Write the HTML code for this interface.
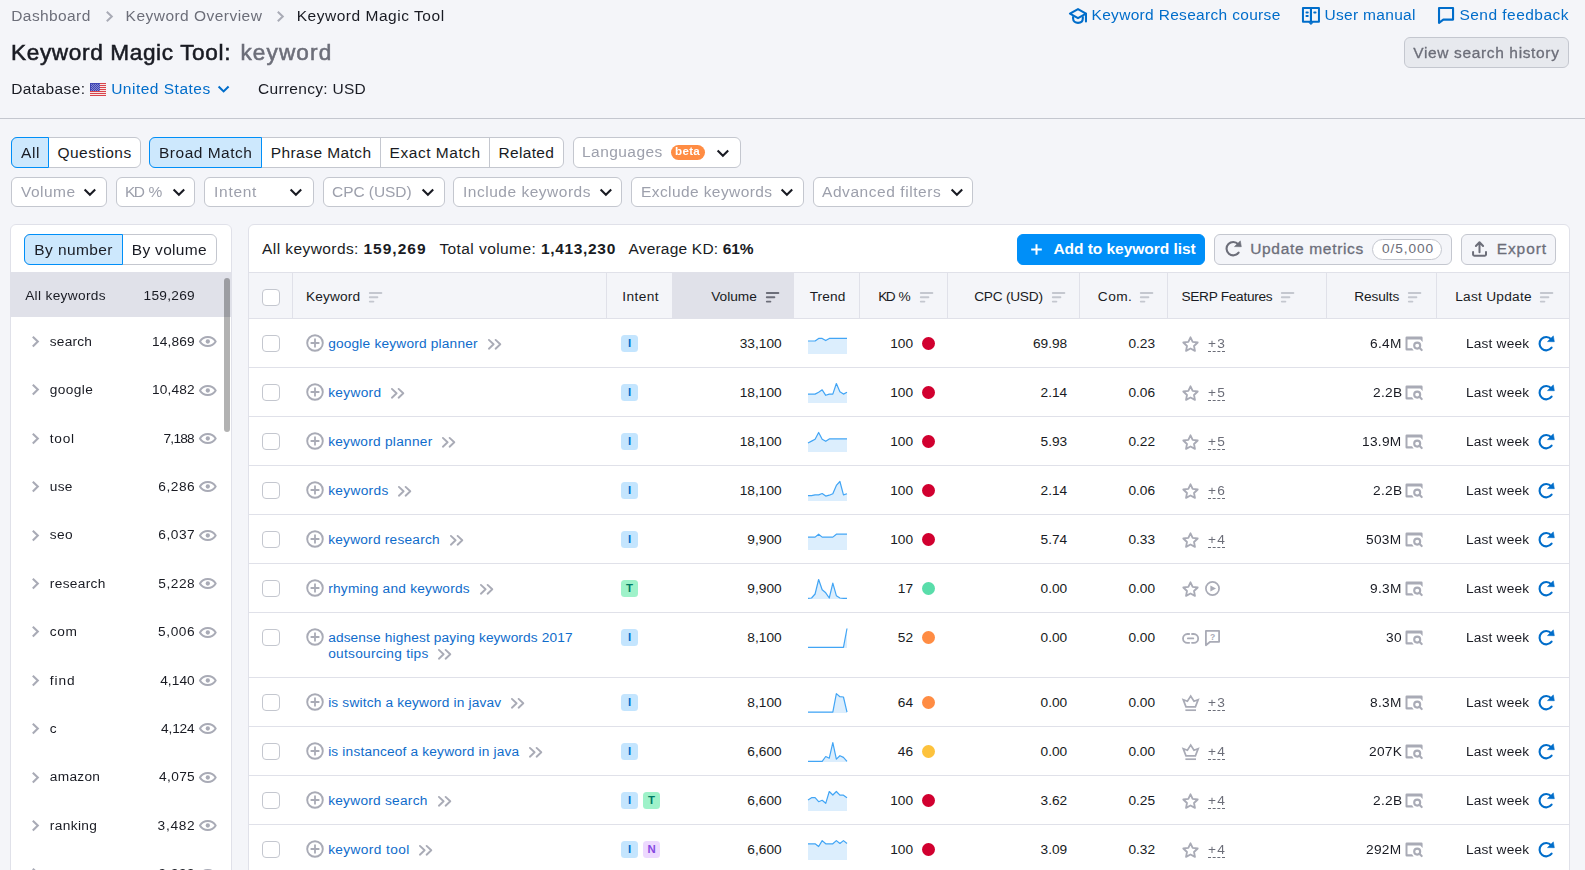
<!DOCTYPE html>
<html lang="en"><head><meta charset="utf-8"><title>Keyword Magic Tool</title>
<style>
*{box-sizing:border-box;margin:0;padding:0}
html,body{width:1585px;height:870px;overflow:hidden;background:#f4f5f9}
body{font-family:"Liberation Sans",sans-serif;color:#191b23;position:relative;font-size:15.4px}
.t{position:absolute;white-space:nowrap;display:block;z-index:3}
.abs{position:absolute}
.btn{position:absolute;border:1px solid #c4c7cf;background:#fff;border-radius:6px}
.sel{background:#cde8fd;border-color:#008ff8;z-index:2}
.panel{position:absolute;background:#fff;border:1px solid #e0e1e9;border-radius:6px}
.cb{position:absolute;width:18px;height:17px;border:1px solid #c4c7cf;border-radius:4px;background:#fff}
.hline{position:absolute;height:1px;background:#e0e1e9}
.vline{position:absolute;width:1px;background:#e0e1e9}
svg{position:absolute;overflow:visible}
a{text-decoration:none}
</style></head>
<body>

<header style="will-change:transform">
<a class="t" style="top:5.60px;height:20px;line-height:20px;font-size:15.50px;color:#6c6e79;left:11.28px;letter-spacing:0.398px;">Dashboard</a>
<svg style="left:105.90px;top:11.00px" width="6.6" height="11.0" viewBox="0 0 6.6 11.0"><path d="M0.8 0.8 L5.80 5.50 L0.8 10.20" fill="none" stroke="#a9abb6" stroke-width="2.00" stroke-linecap="butt" stroke-linejoin="miter"/></svg>
<a class="t" style="top:5.60px;height:20px;line-height:20px;font-size:15.50px;color:#6c6e79;left:125.58px;letter-spacing:0.474px;">Keyword Overview</a>
<svg style="left:277.20px;top:11.00px" width="6.6" height="11.0" viewBox="0 0 6.6 11.0"><path d="M0.8 0.8 L5.80 5.50 L0.8 10.20" fill="none" stroke="#a9abb6" stroke-width="2.00" stroke-linecap="butt" stroke-linejoin="miter"/></svg>
<span class="t" style="top:5.60px;height:20px;line-height:20px;font-size:15.50px;color:#191b23;left:296.68px;letter-spacing:0.529px;">Keyword Magic Tool</span>
<h1 class="t" style="top:39.20px;height:28px;line-height:28px;font-size:22.60px;color:#191b23;left:11.00px;letter-spacing:0.634px;font-weight:400;-webkit-text-stroke:0.55px #191b23;">Keyword Magic Tool:</h1>
<span class="t" style="top:39.20px;height:28px;line-height:28px;font-size:22.60px;color:#6c6e79;left:240.40px;letter-spacing:1.127px;-webkit-text-stroke:0.55px #6c6e79;">keyword</span>
<span class="t" style="top:78.80px;height:20px;line-height:20px;font-size:15.50px;color:#191b23;left:11.28px;letter-spacing:0.382px;">Database:</span>
<svg style="left:90px;top:83px" width="16" height="13" viewBox="0 0 16 13"><rect width="16" height="13" fill="#f6e4e4"/><g fill="#d9434b"><rect y="0" width="16" height="1"/><rect y="2" width="16" height="1"/><rect y="4" width="16" height="1"/><rect y="6" width="16" height="1"/><rect y="8" width="16" height="1"/><rect y="10" width="16" height="1"/><rect y="12" width="16" height="1"/></g><rect width="10" height="8" fill="#3f45b4"/><g fill="#858ad2"><rect x="1.0" y="1.0" width="1" height="1"/><rect x="3.0" y="1.0" width="1" height="1"/><rect x="5.0" y="1.0" width="1" height="1"/><rect x="7.0" y="1.0" width="1" height="1"/><rect x="9.0" y="1.0" width="1" height="1"/><rect x="1.0" y="3.0" width="1" height="1"/><rect x="3.0" y="3.0" width="1" height="1"/><rect x="5.0" y="3.0" width="1" height="1"/><rect x="7.0" y="3.0" width="1" height="1"/><rect x="9.0" y="3.0" width="1" height="1"/><rect x="1.0" y="5.0" width="1" height="1"/><rect x="3.0" y="5.0" width="1" height="1"/><rect x="5.0" y="5.0" width="1" height="1"/><rect x="7.0" y="5.0" width="1" height="1"/><rect x="9.0" y="5.0" width="1" height="1"/><rect x="1.0" y="7.0" width="1" height="1"/><rect x="3.0" y="7.0" width="1" height="1"/><rect x="5.0" y="7.0" width="1" height="1"/><rect x="7.0" y="7.0" width="1" height="1"/><rect x="9.0" y="7.0" width="1" height="1"/><rect x="2.0" y="2.0" width="1" height="1"/><rect x="4.0" y="2.0" width="1" height="1"/><rect x="6.0" y="2.0" width="1" height="1"/><rect x="8.0" y="2.0" width="1" height="1"/><rect x="2.0" y="4.0" width="1" height="1"/><rect x="4.0" y="4.0" width="1" height="1"/><rect x="6.0" y="4.0" width="1" height="1"/><rect x="8.0" y="4.0" width="1" height="1"/><rect x="2.0" y="6.0" width="1" height="1"/><rect x="4.0" y="6.0" width="1" height="1"/><rect x="6.0" y="6.0" width="1" height="1"/><rect x="8.0" y="6.0" width="1" height="1"/></g></svg>
<a class="t" style="top:78.80px;height:20px;line-height:20px;font-size:15.50px;color:#006dca;left:111.18px;letter-spacing:0.497px;">United States</a>
<svg style="left:217.50px;top:86.40px" width="11.2" height="6.8" viewBox="0 0 11.2 6.8"><path d="M0.6 0.6 L5.60 5.40 L10.60 0.6" fill="none" stroke="#006dca" stroke-width="2.10" stroke-linecap="butt" stroke-linejoin="miter"/></svg>
<span class="t" style="top:78.80px;height:20px;line-height:20px;font-size:15.50px;color:#191b23;left:258.08px;letter-spacing:0.283px;">Currency: USD</span>
<svg style="left:1068px;top:7px" width="20" height="18" viewBox="0 0 20 18"><path d="M10 2.05 L18 6.6 L10 11.15 L1.95 6.6 Z" fill="none" stroke="#006dca" stroke-width="2.1" stroke-linejoin="round"/><path d="M5.1 9.2 V11.6 C5.1 14.4 7.4 15.9 10 15.9 C12.6 15.9 14.8 14.4 14.8 11.6 V9.2" fill="none" stroke="#006dca" stroke-width="2.1"/><path d="M17.96 6.8 V14.5" fill="none" stroke="#006dca" stroke-width="2.1" stroke-linecap="round"/></svg>
<a class="t" style="top:4.70px;height:20px;line-height:20px;font-size:15.50px;color:#006dca;left:1091.48px;letter-spacing:0.320px;">Keyword Research course</a>
<svg style="left:1301px;top:6px" width="20" height="20" viewBox="0 0 20 20"><path d="M1.95 1.9 H17.95 V15.8 H1.95 Z" fill="none" stroke="#006dca" stroke-width="2" stroke-linejoin="round"/><path d="M9.94 1.9 V16" stroke="#006dca" stroke-width="2.1"/><path d="M7.9 16.6 L9.94 18.7 L12 16.6 Z" fill="#006dca" stroke="#006dca" stroke-width="0.6" stroke-linejoin="round"/><path d="M5.4 6.46 H6.8 M5.4 10.04 H6.8 M13.2 6.46 H14.6" stroke="#006dca" stroke-width="1.9" stroke-linecap="round"/></svg>
<a class="t" style="top:4.70px;height:20px;line-height:20px;font-size:15.50px;color:#006dca;left:1324.38px;letter-spacing:0.325px;">User manual</a>
<svg style="left:1437px;top:6px" width="18" height="19" viewBox="0 0 18 19"><path d="M2.03 1.98 H16.05 V13.62 H6.3 L2.03 16.9 Z" fill="none" stroke="#006dca" stroke-width="2.1" stroke-linejoin="round"/></svg>
<a class="t" style="top:4.70px;height:20px;line-height:20px;font-size:15.50px;color:#006dca;left:1459.48px;letter-spacing:0.467px;">Send feedback</a>
<div class="btn" style="left:1404px;top:37px;width:165px;height:31px;background:#e7e9ee;border-color:#c4c7cf"></div>
<span class="t" style="top:43.30px;height:20px;line-height:20px;font-size:15.50px;color:#6c6e79;left:1413.18px;letter-spacing:0.645px;-webkit-text-stroke:0.3px #6c6e79;">View search history</span>
<div class="abs" style="left:0;top:118px;width:1585px;height:1px;background:#c4c7cf"></div>
</header>

<section>
<div class="btn " style="left:11.0px;top:137.0px;width:130.0px;height:31.0px;"></div>
<div class="btn sel" style="left:11.0px;top:137.0px;width:38.4px;height:31.0px;border-radius:6px 0 0 6px"></div>
<span class="t" style="top:143.10px;height:20px;line-height:20px;font-size:15.50px;color:#191b23;left:20.88px;will-change:transform;letter-spacing:0.595px;">All</span>
<span class="t" style="top:143.10px;height:20px;line-height:20px;font-size:15.50px;color:#191b23;left:57.38px;letter-spacing:0.504px;">Questions</span>
<div class="btn " style="left:149.0px;top:137.0px;width:415.0px;height:31.0px;"></div>
<div class="btn sel" style="left:149.0px;top:137.0px;width:113.0px;height:31.0px;border-radius:6px 0 0 6px"></div>
<div class="vline" style="left:380px;top:137px;height:31px;background:#c4c7cf"></div>
<div class="vline" style="left:489px;top:137px;height:31px;background:#c4c7cf"></div>
<span class="t" style="top:143.10px;height:20px;line-height:20px;font-size:15.50px;color:#191b23;left:159.18px;will-change:transform;letter-spacing:0.504px;">Broad Match</span>
<span class="t" style="top:143.10px;height:20px;line-height:20px;font-size:15.50px;color:#191b23;left:270.68px;letter-spacing:0.444px;">Phrase Match</span>
<span class="t" style="top:143.10px;height:20px;line-height:20px;font-size:15.50px;color:#191b23;left:389.58px;letter-spacing:0.534px;">Exact Match</span>
<span class="t" style="top:143.10px;height:20px;line-height:20px;font-size:15.50px;color:#191b23;left:498.58px;letter-spacing:0.315px;">Related</span>
<div class="btn " style="left:573.0px;top:137.0px;width:168.0px;height:31.0px;"></div>
<span class="t" style="top:141.50px;height:20px;line-height:20px;font-size:15.50px;color:#9da0ac;left:582.08px;will-change:transform;letter-spacing:0.450px;">Languages</span>
<div class="abs" style="left:670.8px;top:144.8px;width:34.2px;height:15px;border-radius:7.5px;background:#ff8c43"></div>
<span class="t" style="top:144.40px;height:14px;line-height:14px;font-size:11.60px;color:#fff;left:675.34px;font-weight:700;will-change:transform;letter-spacing:0.311px;">beta</span>
<svg style="left:716.50px;top:149.80px" width="11.8" height="7.2" viewBox="0 0 11.8 7.2"><path d="M0.6 0.6 L5.90 5.80 L11.20 0.6" fill="none" stroke="#191b23" stroke-width="2.10" stroke-linecap="butt" stroke-linejoin="miter"/></svg>
<div class="btn " style="left:11.0px;top:177.0px;width:96.0px;height:30.0px;"></div>
<span class="t" style="top:181.60px;height:20px;line-height:20px;font-size:15.50px;color:#9da0ac;left:20.88px;will-change:transform;letter-spacing:0.463px;">Volume</span>
<svg style="left:84.00px;top:189.40px" width="11.8" height="7.2" viewBox="0 0 11.8 7.2"><path d="M0.6 0.6 L5.90 5.80 L11.20 0.6" fill="none" stroke="#191b23" stroke-width="2.10" stroke-linecap="butt" stroke-linejoin="miter"/></svg>
<div class="btn " style="left:116.0px;top:177.0px;width:79.0px;height:30.0px;"></div>
<span class="t" style="top:181.60px;height:20px;line-height:20px;font-size:15.50px;color:#9da0ac;left:125.38px;will-change:transform;letter-spacing:-1.634px;word-spacing:2.60px;">KD %</span>
<svg style="left:172.90px;top:189.40px" width="11.8" height="7.2" viewBox="0 0 11.8 7.2"><path d="M0.6 0.6 L5.90 5.80 L11.20 0.6" fill="none" stroke="#191b23" stroke-width="2.10" stroke-linecap="butt" stroke-linejoin="miter"/></svg>
<div class="btn " style="left:204.0px;top:177.0px;width:110.0px;height:30.0px;"></div>
<span class="t" style="top:181.60px;height:20px;line-height:20px;font-size:15.50px;color:#9da0ac;left:213.68px;will-change:transform;letter-spacing:0.727px;">Intent</span>
<svg style="left:289.50px;top:189.40px" width="11.8" height="7.2" viewBox="0 0 11.8 7.2"><path d="M0.6 0.6 L5.90 5.80 L11.20 0.6" fill="none" stroke="#191b23" stroke-width="2.10" stroke-linecap="butt" stroke-linejoin="miter"/></svg>
<div class="btn " style="left:323.0px;top:177.0px;width:122.0px;height:30.0px;"></div>
<span class="t" style="top:181.60px;height:20px;line-height:20px;font-size:15.50px;color:#9da0ac;left:332.48px;will-change:transform;letter-spacing:-0.058px;">CPC (USD)</span>
<svg style="left:422.00px;top:189.40px" width="11.8" height="7.2" viewBox="0 0 11.8 7.2"><path d="M0.6 0.6 L5.90 5.80 L11.20 0.6" fill="none" stroke="#191b23" stroke-width="2.10" stroke-linecap="butt" stroke-linejoin="miter"/></svg>
<div class="btn " style="left:453.0px;top:177.0px;width:169.0px;height:30.0px;"></div>
<span class="t" style="top:181.60px;height:20px;line-height:20px;font-size:15.50px;color:#9da0ac;left:462.98px;will-change:transform;letter-spacing:0.517px;">Include keywords</span>
<svg style="left:599.90px;top:189.40px" width="11.8" height="7.2" viewBox="0 0 11.8 7.2"><path d="M0.6 0.6 L5.90 5.80 L11.20 0.6" fill="none" stroke="#191b23" stroke-width="2.10" stroke-linecap="butt" stroke-linejoin="miter"/></svg>
<div class="btn " style="left:631.0px;top:177.0px;width:173.0px;height:30.0px;"></div>
<span class="t" style="top:181.60px;height:20px;line-height:20px;font-size:15.50px;color:#9da0ac;left:640.68px;will-change:transform;letter-spacing:0.407px;">Exclude keywords</span>
<svg style="left:781.30px;top:189.40px" width="11.8" height="7.2" viewBox="0 0 11.8 7.2"><path d="M0.6 0.6 L5.90 5.80 L11.20 0.6" fill="none" stroke="#191b23" stroke-width="2.10" stroke-linecap="butt" stroke-linejoin="miter"/></svg>
<div class="btn " style="left:813.0px;top:177.0px;width:160.0px;height:30.0px;"></div>
<span class="t" style="top:181.60px;height:20px;line-height:20px;font-size:15.50px;color:#9da0ac;left:822.18px;will-change:transform;letter-spacing:0.562px;">Advanced filters</span>
<svg style="left:950.50px;top:189.40px" width="11.8" height="7.2" viewBox="0 0 11.8 7.2"><path d="M0.6 0.6 L5.90 5.80 L11.20 0.6" fill="none" stroke="#191b23" stroke-width="2.10" stroke-linecap="butt" stroke-linejoin="miter"/></svg>
</section>

<aside style="will-change:transform">
<div class="panel" style="left:10px;top:224px;width:222px;height:660px;border-radius:6px 6px 0 0"></div>
<div class="btn " style="left:24.0px;top:234.0px;width:193.4px;height:31.0px;"></div>
<div class="btn sel" style="left:24.0px;top:234.0px;width:98.8px;height:31.0px;border-radius:6px 0 0 6px"></div>
<span class="t" style="top:239.60px;height:20px;line-height:20px;font-size:15.50px;color:#191b23;left:34.28px;letter-spacing:0.408px;">By number</span>
<span class="t" style="top:239.60px;height:20px;line-height:20px;font-size:15.50px;color:#191b23;left:131.78px;letter-spacing:0.307px;">By volume</span>
<div class="abs" style="left:11px;top:272px;width:220px;height:45px;background:#e0e1e9"></div>
<span class="t" style="top:286.40px;height:20px;line-height:20px;font-size:13.70px;color:#191b23;left:25.15px;letter-spacing:0.333px;">All keywords</span>
<span class="t" style="top:286.40px;height:20px;line-height:20px;font-size:13.70px;color:#191b23;right:1390.01px;letter-spacing:0.274px;">159,269</span>
<div class="abs" style="left:223.5px;top:277.8px;width:6.6px;height:154.7px;border-radius:3.3px;background:rgba(0,0,0,0.3)"></div>
<svg style="left:32.20px;top:335.90px" width="6.6" height="11.2" viewBox="0 0 6.6 11.2"><path d="M0.8 0.8 L5.80 5.60 L0.8 10.40" fill="none" stroke="#a9abb6" stroke-width="2.10" stroke-linecap="butt" stroke-linejoin="miter"/></svg>
<span class="t" style="top:332.00px;height:20px;line-height:20px;font-size:13.70px;color:#191b23;left:49.85px;letter-spacing:0.169px;">search</span>
<span class="t" style="top:332.00px;height:20px;line-height:20px;font-size:13.70px;color:#191b23;right:1390.13px;letter-spacing:0.152px;">14,869</span>
<svg style="left:199.30px;top:336.10px" width="17.6" height="11" viewBox="0 0 17.6 11"><path d="M0.9 5.5 C3 2 5.8 0.9 8.8 0.9 C11.8 0.9 14.6 2 16.7 5.5 C14.6 9 11.8 10.1 8.8 10.1 C5.8 10.1 3 9 0.9 5.5 Z" fill="none" stroke="#a9abb6" stroke-width="2" stroke-linejoin="round"/><circle cx="8.8" cy="5.5" r="2.15" fill="#a9abb6"/></svg>
<svg style="left:32.20px;top:384.30px" width="6.6" height="11.2" viewBox="0 0 6.6 11.2"><path d="M0.8 0.8 L5.80 5.60 L0.8 10.40" fill="none" stroke="#a9abb6" stroke-width="2.10" stroke-linecap="butt" stroke-linejoin="miter"/></svg>
<span class="t" style="top:380.00px;height:20px;line-height:20px;font-size:13.70px;color:#191b23;left:49.85px;letter-spacing:0.385px;">google</span>
<span class="t" style="top:380.00px;height:20px;line-height:20px;font-size:13.70px;color:#191b23;right:1390.13px;letter-spacing:0.152px;">10,482</span>
<svg style="left:199.30px;top:384.50px" width="17.6" height="11" viewBox="0 0 17.6 11"><path d="M0.9 5.5 C3 2 5.8 0.9 8.8 0.9 C11.8 0.9 14.6 2 16.7 5.5 C14.6 9 11.8 10.1 8.8 10.1 C5.8 10.1 3 9 0.9 5.5 Z" fill="none" stroke="#a9abb6" stroke-width="2" stroke-linejoin="round"/><circle cx="8.8" cy="5.5" r="2.15" fill="#a9abb6"/></svg>
<svg style="left:32.20px;top:432.70px" width="6.6" height="11.2" viewBox="0 0 6.6 11.2"><path d="M0.8 0.8 L5.80 5.60 L0.8 10.40" fill="none" stroke="#a9abb6" stroke-width="2.10" stroke-linecap="butt" stroke-linejoin="miter"/></svg>
<span class="t" style="top:429.00px;height:20px;line-height:20px;font-size:13.70px;color:#191b23;left:49.85px;letter-spacing:0.725px;">tool</span>
<span class="t" style="top:429.00px;height:20px;line-height:20px;font-size:13.70px;color:#191b23;right:1391.04px;letter-spacing:-0.755px;">7,188</span>
<svg style="left:199.30px;top:432.90px" width="17.6" height="11" viewBox="0 0 17.6 11"><path d="M0.9 5.5 C3 2 5.8 0.9 8.8 0.9 C11.8 0.9 14.6 2 16.7 5.5 C14.6 9 11.8 10.1 8.8 10.1 C5.8 10.1 3 9 0.9 5.5 Z" fill="none" stroke="#a9abb6" stroke-width="2" stroke-linejoin="round"/><circle cx="8.8" cy="5.5" r="2.15" fill="#a9abb6"/></svg>
<svg style="left:32.20px;top:481.10px" width="6.6" height="11.2" viewBox="0 0 6.6 11.2"><path d="M0.8 0.8 L5.80 5.60 L0.8 10.40" fill="none" stroke="#a9abb6" stroke-width="2.10" stroke-linecap="butt" stroke-linejoin="miter"/></svg>
<span class="t" style="top:477.00px;height:20px;line-height:20px;font-size:13.70px;color:#191b23;left:49.85px;letter-spacing:0.188px;">use</span>
<span class="t" style="top:477.00px;height:20px;line-height:20px;font-size:13.70px;color:#191b23;right:1389.74px;letter-spacing:0.545px;">6,286</span>
<svg style="left:199.30px;top:481.30px" width="17.6" height="11" viewBox="0 0 17.6 11"><path d="M0.9 5.5 C3 2 5.8 0.9 8.8 0.9 C11.8 0.9 14.6 2 16.7 5.5 C14.6 9 11.8 10.1 8.8 10.1 C5.8 10.1 3 9 0.9 5.5 Z" fill="none" stroke="#a9abb6" stroke-width="2" stroke-linejoin="round"/><circle cx="8.8" cy="5.5" r="2.15" fill="#a9abb6"/></svg>
<svg style="left:32.20px;top:529.50px" width="6.6" height="11.2" viewBox="0 0 6.6 11.2"><path d="M0.8 0.8 L5.80 5.60 L0.8 10.40" fill="none" stroke="#a9abb6" stroke-width="2.10" stroke-linecap="butt" stroke-linejoin="miter"/></svg>
<span class="t" style="top:525.00px;height:20px;line-height:20px;font-size:13.70px;color:#191b23;left:49.85px;letter-spacing:0.288px;">seo</span>
<span class="t" style="top:525.00px;height:20px;line-height:20px;font-size:13.70px;color:#191b23;right:1389.74px;letter-spacing:0.545px;">6,037</span>
<svg style="left:199.30px;top:529.70px" width="17.6" height="11" viewBox="0 0 17.6 11"><path d="M0.9 5.5 C3 2 5.8 0.9 8.8 0.9 C11.8 0.9 14.6 2 16.7 5.5 C14.6 9 11.8 10.1 8.8 10.1 C5.8 10.1 3 9 0.9 5.5 Z" fill="none" stroke="#a9abb6" stroke-width="2" stroke-linejoin="round"/><circle cx="8.8" cy="5.5" r="2.15" fill="#a9abb6"/></svg>
<svg style="left:32.20px;top:577.90px" width="6.6" height="11.2" viewBox="0 0 6.6 11.2"><path d="M0.8 0.8 L5.80 5.60 L0.8 10.40" fill="none" stroke="#a9abb6" stroke-width="2.10" stroke-linecap="butt" stroke-linejoin="miter"/></svg>
<span class="t" style="top:574.00px;height:20px;line-height:20px;font-size:13.70px;color:#191b23;left:49.85px;letter-spacing:0.309px;">research</span>
<span class="t" style="top:574.00px;height:20px;line-height:20px;font-size:13.70px;color:#191b23;right:1389.74px;letter-spacing:0.545px;">5,228</span>
<svg style="left:199.30px;top:578.10px" width="17.6" height="11" viewBox="0 0 17.6 11"><path d="M0.9 5.5 C3 2 5.8 0.9 8.8 0.9 C11.8 0.9 14.6 2 16.7 5.5 C14.6 9 11.8 10.1 8.8 10.1 C5.8 10.1 3 9 0.9 5.5 Z" fill="none" stroke="#a9abb6" stroke-width="2" stroke-linejoin="round"/><circle cx="8.8" cy="5.5" r="2.15" fill="#a9abb6"/></svg>
<svg style="left:32.20px;top:626.30px" width="6.6" height="11.2" viewBox="0 0 6.6 11.2"><path d="M0.8 0.8 L5.80 5.60 L0.8 10.40" fill="none" stroke="#a9abb6" stroke-width="2.10" stroke-linecap="butt" stroke-linejoin="miter"/></svg>
<span class="t" style="top:622.00px;height:20px;line-height:20px;font-size:13.70px;color:#191b23;left:49.85px;letter-spacing:0.541px;">com</span>
<span class="t" style="top:622.00px;height:20px;line-height:20px;font-size:13.70px;color:#191b23;right:1389.66px;letter-spacing:0.620px;">5,006</span>
<svg style="left:199.30px;top:626.50px" width="17.6" height="11" viewBox="0 0 17.6 11"><path d="M0.9 5.5 C3 2 5.8 0.9 8.8 0.9 C11.8 0.9 14.6 2 16.7 5.5 C14.6 9 11.8 10.1 8.8 10.1 C5.8 10.1 3 9 0.9 5.5 Z" fill="none" stroke="#a9abb6" stroke-width="2" stroke-linejoin="round"/><circle cx="8.8" cy="5.5" r="2.15" fill="#a9abb6"/></svg>
<svg style="left:32.20px;top:674.70px" width="6.6" height="11.2" viewBox="0 0 6.6 11.2"><path d="M0.8 0.8 L5.80 5.60 L0.8 10.40" fill="none" stroke="#a9abb6" stroke-width="2.10" stroke-linecap="butt" stroke-linejoin="miter"/></svg>
<span class="t" style="top:671.00px;height:20px;line-height:20px;font-size:13.70px;color:#191b23;left:49.85px;letter-spacing:0.892px;">find</span>
<span class="t" style="top:671.00px;height:20px;line-height:20px;font-size:13.70px;color:#191b23;right:1390.21px;letter-spacing:0.070px;">4,140</span>
<svg style="left:199.30px;top:674.90px" width="17.6" height="11" viewBox="0 0 17.6 11"><path d="M0.9 5.5 C3 2 5.8 0.9 8.8 0.9 C11.8 0.9 14.6 2 16.7 5.5 C14.6 9 11.8 10.1 8.8 10.1 C5.8 10.1 3 9 0.9 5.5 Z" fill="none" stroke="#a9abb6" stroke-width="2" stroke-linejoin="round"/><circle cx="8.8" cy="5.5" r="2.15" fill="#a9abb6"/></svg>
<svg style="left:32.20px;top:723.10px" width="6.6" height="11.2" viewBox="0 0 6.6 11.2"><path d="M0.8 0.8 L5.80 5.60 L0.8 10.40" fill="none" stroke="#a9abb6" stroke-width="2.10" stroke-linecap="butt" stroke-linejoin="miter"/></svg>
<span class="t" style="top:719.00px;height:20px;line-height:20px;font-size:13.70px;color:#191b23;left:49.85px;letter-spacing:0.815px;">c</span>
<span class="t" style="top:719.00px;height:20px;line-height:20px;font-size:13.70px;color:#191b23;right:1390.41px;letter-spacing:-0.130px;">4,124</span>
<svg style="left:199.30px;top:723.30px" width="17.6" height="11" viewBox="0 0 17.6 11"><path d="M0.9 5.5 C3 2 5.8 0.9 8.8 0.9 C11.8 0.9 14.6 2 16.7 5.5 C14.6 9 11.8 10.1 8.8 10.1 C5.8 10.1 3 9 0.9 5.5 Z" fill="none" stroke="#a9abb6" stroke-width="2" stroke-linejoin="round"/><circle cx="8.8" cy="5.5" r="2.15" fill="#a9abb6"/></svg>
<svg style="left:32.20px;top:771.50px" width="6.6" height="11.2" viewBox="0 0 6.6 11.2"><path d="M0.8 0.8 L5.80 5.60 L0.8 10.40" fill="none" stroke="#a9abb6" stroke-width="2.10" stroke-linecap="butt" stroke-linejoin="miter"/></svg>
<span class="t" style="top:767.00px;height:20px;line-height:20px;font-size:13.70px;color:#191b23;left:49.85px;letter-spacing:0.285px;">amazon</span>
<span class="t" style="top:767.00px;height:20px;line-height:20px;font-size:13.70px;color:#191b23;right:1389.94px;letter-spacing:0.345px;">4,075</span>
<svg style="left:199.30px;top:771.70px" width="17.6" height="11" viewBox="0 0 17.6 11"><path d="M0.9 5.5 C3 2 5.8 0.9 8.8 0.9 C11.8 0.9 14.6 2 16.7 5.5 C14.6 9 11.8 10.1 8.8 10.1 C5.8 10.1 3 9 0.9 5.5 Z" fill="none" stroke="#a9abb6" stroke-width="2" stroke-linejoin="round"/><circle cx="8.8" cy="5.5" r="2.15" fill="#a9abb6"/></svg>
<svg style="left:32.20px;top:819.90px" width="6.6" height="11.2" viewBox="0 0 6.6 11.2"><path d="M0.8 0.8 L5.80 5.60 L0.8 10.40" fill="none" stroke="#a9abb6" stroke-width="2.10" stroke-linecap="butt" stroke-linejoin="miter"/></svg>
<span class="t" style="top:816.00px;height:20px;line-height:20px;font-size:13.70px;color:#191b23;left:49.85px;letter-spacing:0.355px;">ranking</span>
<span class="t" style="top:816.00px;height:20px;line-height:20px;font-size:13.70px;color:#191b23;right:1389.56px;letter-spacing:0.720px;">3,482</span>
<svg style="left:199.30px;top:820.10px" width="17.6" height="11" viewBox="0 0 17.6 11"><path d="M0.9 5.5 C3 2 5.8 0.9 8.8 0.9 C11.8 0.9 14.6 2 16.7 5.5 C14.6 9 11.8 10.1 8.8 10.1 C5.8 10.1 3 9 0.9 5.5 Z" fill="none" stroke="#a9abb6" stroke-width="2" stroke-linejoin="round"/><circle cx="8.8" cy="5.5" r="2.15" fill="#a9abb6"/></svg>
<svg style="left:32.20px;top:868.30px" width="6.6" height="11.2" viewBox="0 0 6.6 11.2"><path d="M0.8 0.8 L5.80 5.60 L0.8 10.40" fill="none" stroke="#a9abb6" stroke-width="2.10" stroke-linecap="butt" stroke-linejoin="miter"/></svg>
<span class="t" style="top:864.00px;height:20px;line-height:20px;font-size:13.70px;color:#191b23;left:49.85px;letter-spacing:-0.017px;">more</span>
<span class="t" style="top:864.00px;height:20px;line-height:20px;font-size:13.70px;color:#191b23;right:1389.81px;letter-spacing:0.470px;">3,333</span>
<svg style="left:199.30px;top:868.50px" width="17.6" height="11" viewBox="0 0 17.6 11"><path d="M0.9 5.5 C3 2 5.8 0.9 8.8 0.9 C11.8 0.9 14.6 2 16.7 5.5 C14.6 9 11.8 10.1 8.8 10.1 C5.8 10.1 3 9 0.9 5.5 Z" fill="none" stroke="#a9abb6" stroke-width="2" stroke-linejoin="round"/><circle cx="8.8" cy="5.5" r="2.15" fill="#a9abb6"/></svg>
</aside>

<main>
<div class="panel" style="left:248px;top:224px;width:1322px;height:660px;border-radius:6px 6px 0 0"></div>
<span class="t" style="top:239.00px;height:20px;line-height:20px;font-size:15.50px;color:#191b23;left:262.08px;letter-spacing:0.418px;">All keywords:</span>
<span class="t" style="top:239.00px;height:20px;line-height:20px;font-size:15.50px;color:#191b23;left:363.48px;font-weight:700;letter-spacing:1.015px;">159,269</span>
<span class="t" style="top:239.00px;height:20px;line-height:20px;font-size:15.50px;color:#191b23;left:439.38px;letter-spacing:0.425px;">Total volume:</span>
<span class="t" style="top:239.00px;height:20px;line-height:20px;font-size:15.50px;color:#191b23;left:540.88px;font-weight:700;letter-spacing:0.683px;">1,413,230</span>
<span class="t" style="top:239.00px;height:20px;line-height:20px;font-size:15.50px;color:#191b23;left:628.48px;letter-spacing:0.202px;">Average KD:</span>
<span class="t" style="top:239.00px;height:20px;line-height:20px;font-size:15.50px;color:#191b23;left:722.78px;font-weight:700;letter-spacing:-0.153px;">61%</span>
<div class="btn" style="left:1016.7px;top:234px;width:188px;height:31px;background:#008ff8;border-color:#008ff8"></div>
<svg style="left:1030.6px;top:243.8px" width="11" height="11" viewBox="0 0 11 11"><path d="M5.5 0.2 V10.8 M0.2 5.5 H10.8" stroke="#fff" stroke-width="2" fill="none"/></svg>
<span class="t" style="top:238.70px;height:20px;line-height:20px;font-size:15.50px;color:#fff;left:1053.38px;font-weight:700;letter-spacing:-0.036px;">Add to keyword list</span>
<div class="btn" style="left:1214px;top:234px;width:238px;height:31px;background:#f4f5f9;border-color:#c4c7cf"></div>
<svg style="left:1224.60px;top:240.40px" width="17" height="16.5" viewBox="0 0 17 16.5"><path d="M13.6 12.7 A6.7 6.7 0 1 1 13.2 4.1" fill="none" stroke="#6c6e79" stroke-width="2.1" stroke-linecap="round"/><path d="M15.3 0.9 L16.3 6.7 L9.5 6.6 Z" fill="#6c6e79" stroke="#6c6e79" stroke-width="0.6" stroke-linejoin="round"/></svg>
<span class="t" style="top:238.70px;height:20px;line-height:20px;font-size:15.50px;color:#6c6e79;left:1250.18px;letter-spacing:0.683px;-webkit-text-stroke:0.3px #6c6e79;">Update metrics</span>
<div class="abs" style="left:1372px;top:238.5px;width:70px;height:21.5px;border:1px solid #c4c7cf;border-radius:11px;background:#fff"></div>
<span class="t" style="top:239.00px;height:20px;line-height:20px;font-size:13.70px;color:#6c6e79;left:1381.95px;letter-spacing:0.909px;">0/5,000</span>
<div class="btn" style="left:1461px;top:234px;width:95px;height:31px;background:#f4f5f9;border-color:#c4c7cf"></div>
<svg style="left:1471px;top:240px" width="17" height="18" viewBox="0 0 17 18"><path d="M2.07 12.1 V14.6 Q2.07 15.76 3.2 15.76 H13.9 Q15 15.76 15 14.6 V12.1" fill="none" stroke="#6c6e79" stroke-width="2" stroke-linecap="round"/><path d="M8.5 12.2 V2.6 M4.9 6 L8.5 2.2 L12.1 6" fill="none" stroke="#6c6e79" stroke-width="2" stroke-linecap="round" stroke-linejoin="round"/></svg>
<span class="t" style="top:238.70px;height:20px;line-height:20px;font-size:15.50px;color:#6c6e79;left:1496.78px;letter-spacing:0.884px;-webkit-text-stroke:0.3px #6c6e79;">Export</span>
<div class="abs" style="left:249px;top:272px;width:1320px;height:47px;background:#f4f5f9;border-top:1px solid #e0e1e9;border-bottom:1px solid #e0e1e9"></div>
<div class="abs" style="left:672px;top:272px;width:122px;height:47px;background:#e0e1e9"></div>
<div class="vline" style="left:292.0px;top:273px;height:45px;background:#e0e1e9"></div>
<div class="vline" style="left:606.0px;top:273px;height:45px;background:#e0e1e9"></div>
<div class="vline" style="left:859.0px;top:273px;height:45px;background:#e0e1e9"></div>
<div class="vline" style="left:947.0px;top:273px;height:45px;background:#e0e1e9"></div>
<div class="vline" style="left:1079.0px;top:273px;height:45px;background:#e0e1e9"></div>
<div class="vline" style="left:1167.0px;top:273px;height:45px;background:#e0e1e9"></div>
<div class="vline" style="left:1326.0px;top:273px;height:45px;background:#e0e1e9"></div>
<div class="vline" style="left:1436.0px;top:273px;height:45px;background:#e0e1e9"></div>
<div class="cb" style="left:262px;top:289px"></div>
<span class="t" style="top:286.60px;height:20px;line-height:20px;font-size:13.70px;color:#191b23;left:305.95px;letter-spacing:0.143px;">Keyword</span>
<svg style="left:368.70px;top:291.70px" width="13.2" height="10.6" viewBox="0 0 13.2 10.6"><path d="M0.8 1 H12.4 M0.8 5.3 H8.4 M0.8 9.6 H4.4" stroke="#c4c7cf" stroke-width="1.9" stroke-linecap="round" fill="none"/></svg>
<span class="t" style="top:286.60px;height:20px;line-height:20px;font-size:13.70px;color:#191b23;left:622.15px;letter-spacing:0.438px;">Intent</span>
<span class="t" style="top:286.60px;height:20px;line-height:20px;font-size:13.70px;color:#191b23;left:711.25px;letter-spacing:-0.007px;">Volume</span>
<svg style="left:766.20px;top:291.70px" width="13.2" height="10.6" viewBox="0 0 13.2 10.6"><path d="M0.8 1 H12.4 M0.8 5.3 H8.4 M0.8 9.6 H4.4" stroke="#6c6e79" stroke-width="1.9" stroke-linecap="round" fill="none"/></svg>
<span class="t" style="top:286.60px;height:20px;line-height:20px;font-size:13.70px;color:#191b23;left:809.65px;letter-spacing:0.121px;">Trend</span>
<span class="t" style="top:286.60px;height:20px;line-height:20px;font-size:13.70px;color:#191b23;left:878.25px;letter-spacing:-1.585px;word-spacing:2.20px;">KD %</span>
<svg style="left:920.00px;top:291.70px" width="13.2" height="10.6" viewBox="0 0 13.2 10.6"><path d="M0.8 1 H12.4 M0.8 5.3 H8.4 M0.8 9.6 H4.4" stroke="#c4c7cf" stroke-width="1.9" stroke-linecap="round" fill="none"/></svg>
<span class="t" style="top:286.60px;height:20px;line-height:20px;font-size:13.70px;color:#191b23;left:974.15px;letter-spacing:-0.240px;">CPC (USD)</span>
<svg style="left:1052.00px;top:291.70px" width="13.2" height="10.6" viewBox="0 0 13.2 10.6"><path d="M0.8 1 H12.4 M0.8 5.3 H8.4 M0.8 9.6 H4.4" stroke="#c4c7cf" stroke-width="1.9" stroke-linecap="round" fill="none"/></svg>
<span class="t" style="top:286.60px;height:20px;line-height:20px;font-size:13.70px;color:#191b23;left:1097.85px;letter-spacing:0.411px;">Com.</span>
<svg style="left:1140.00px;top:291.70px" width="13.2" height="10.6" viewBox="0 0 13.2 10.6"><path d="M0.8 1 H12.4 M0.8 5.3 H8.4 M0.8 9.6 H4.4" stroke="#c4c7cf" stroke-width="1.9" stroke-linecap="round" fill="none"/></svg>
<span class="t" style="top:286.60px;height:20px;line-height:20px;font-size:13.70px;color:#191b23;left:1181.45px;letter-spacing:-0.306px;">SERP Features</span>
<svg style="left:1281.20px;top:291.70px" width="13.2" height="10.6" viewBox="0 0 13.2 10.6"><path d="M0.8 1 H12.4 M0.8 5.3 H8.4 M0.8 9.6 H4.4" stroke="#c4c7cf" stroke-width="1.9" stroke-linecap="round" fill="none"/></svg>
<span class="t" style="top:286.60px;height:20px;line-height:20px;font-size:13.70px;color:#191b23;left:1354.15px;letter-spacing:-0.086px;">Results</span>
<svg style="left:1408.00px;top:291.70px" width="13.2" height="10.6" viewBox="0 0 13.2 10.6"><path d="M0.8 1 H12.4 M0.8 5.3 H8.4 M0.8 9.6 H4.4" stroke="#c4c7cf" stroke-width="1.9" stroke-linecap="round" fill="none"/></svg>
<span class="t" style="top:286.60px;height:20px;line-height:20px;font-size:13.70px;color:#191b23;left:1455.25px;letter-spacing:0.259px;">Last Update</span>
<svg style="left:1540.30px;top:291.70px" width="13.2" height="10.6" viewBox="0 0 13.2 10.6"><path d="M0.8 1 H12.4 M0.8 5.3 H8.4 M0.8 9.6 H4.4" stroke="#c4c7cf" stroke-width="1.9" stroke-linecap="round" fill="none"/></svg>
<div class="cb" style="left:262px;top:335.0px"></div>
<svg style="left:305.90px;top:334.40px" width="18" height="18" viewBox="0 0 18 18"><circle cx="9" cy="9" r="7.8" fill="none" stroke="#a9abb6" stroke-width="1.9"/><path d="M9 4.6 V13.4 M4.6 9 H13.4" stroke="#a9abb6" stroke-width="1.8" fill="none"/></svg>
<a class="t" style="top:334.00px;height:20px;line-height:20px;font-size:13.70px;color:#0f6ccb;left:328.15px;letter-spacing:0.195px;">google keyword planner</a>
<svg style="left:487.70px;top:339.00px" width="13.4" height="10.6" viewBox="0 0 13.4 10.6"><path d="M0.9 0.9 L5.6 5.3 L0.9 9.7 M7.6 0.9 L12.3 5.3 L7.6 9.7" fill="none" stroke="#a9abb6" stroke-width="1.9" stroke-linecap="round" stroke-linejoin="round"/></svg>
<div class="abs" style="left:621.0px;top:335.0px;width:17.2px;height:17px;border-radius:3.5px;background:#c4e5fe"></div><span class="t" style="top:335.00px;height:17px;line-height:17px;font-size:11.40px;color:#006dca;left:621.00px;font-weight:700;width:17.2px;text-align:center;">I</span>
<span class="t" style="top:334.00px;height:20px;line-height:20px;font-size:13.70px;color:#191b23;right:803.38px;">33,100</span>
<svg style="left:808.00px;top:334.00px" width="39" height="20" viewBox="0 0 39 20"><path d="M0.00 7.00 L3.55 7.00 L7.09 7.00 L10.64 4.40 L14.18 4.40 L17.73 6.60 L21.27 4.40 L24.82 4.40 L28.36 4.40 L31.91 4.40 L35.45 4.40 L39.00 4.40 L39 20 L0 20 Z" fill="#dceefd"/><path d="M0.00 7.00 L3.55 7.00 L7.09 7.00 L10.64 4.40 L14.18 4.40 L17.73 6.60 L21.27 4.40 L24.82 4.40 L28.36 4.40 L31.91 4.40 L35.45 4.40 L39.00 4.40" fill="none" stroke="#42a5f5" stroke-width="1.2" stroke-linejoin="round"/></svg>
<span class="t" style="top:334.00px;height:20px;line-height:20px;font-size:13.70px;color:#191b23;right:671.98px;">100</span>
<div class="abs" style="left:922.1px;top:337.1px;width:12.9px;height:12.9px;border-radius:50%;background:#d1002f"></div>
<span class="t" style="top:334.00px;height:20px;line-height:20px;font-size:13.70px;color:#191b23;right:517.78px;">69.98</span>
<span class="t" style="top:334.00px;height:20px;line-height:20px;font-size:13.70px;color:#191b23;right:429.98px;">0.23</span>
<svg style="left:1182.20px;top:335.80px" width="17" height="16" viewBox="0 0 17 16"><path d="M8.5 1.3 L10.65 5.85 L15.7 6.5 L12 9.95 L12.95 14.9 L8.5 12.5 L4.05 14.9 L5 9.95 L1.3 6.5 L6.35 5.85 Z" fill="none" stroke="#a9abb6" stroke-width="1.85" stroke-linejoin="round"/></svg>
<span class="t" style="top:334.00px;height:20px;line-height:20px;font-size:13.70px;color:#6c6e79;left:1208.05px;will-change:transform;letter-spacing:1.144px;">+3</span>
<svg style="left:1208px;top:351px" width="17" height="1" viewBox="0 0 17 1"><path d="M0 0.5 H17" stroke="#6c6e79" stroke-width="1" stroke-dasharray="3 1.67"/></svg>
<span class="t" style="top:334.00px;height:20px;line-height:20px;font-size:13.70px;color:#191b23;right:183.08px;will-change:transform;letter-spacing:0.3px;">6.4M</span>
<svg style="left:1404.70px;top:335.60px" width="18" height="15" viewBox="0 0 18 15"><path d="M0.5 1.7 Q0.5 0.5 1.7 0.5 H16.4 Q17.6 0.5 17.6 1.7 V6 L15.3 3.6 H2.5 V12.3 H7 L8.7 14.4 H1.7 Q0.5 14.4 0.5 13.2 Z" fill="#a9abb6"/><circle cx="12.2" cy="9.6" r="3" fill="none" stroke="#a9abb6" stroke-width="2.1"/><path d="M14.4 11.8 L16.7 14.1" stroke="#a9abb6" stroke-width="2.1" stroke-linecap="round"/></svg>
<span class="t" style="top:334.00px;height:20px;line-height:20px;font-size:13.70px;color:#191b23;left:1465.95px;will-change:transform;letter-spacing:0.185px;">Last week</span>
<svg style="left:1537.90px;top:335.20px" width="17" height="16.5" viewBox="0 0 17 16.5"><path d="M13.6 12.7 A6.7 6.7 0 1 1 13.2 4.1" fill="none" stroke="#006dca" stroke-width="2.1" stroke-linecap="round"/><path d="M15.3 0.9 L16.3 6.7 L9.5 6.6 Z" fill="#006dca" stroke="#006dca" stroke-width="0.6" stroke-linejoin="round"/></svg>
<div class="hline" style="left:249px;top:367px;width:1320px"></div>
<div class="cb" style="left:262px;top:384.0px"></div>
<svg style="left:305.90px;top:383.40px" width="18" height="18" viewBox="0 0 18 18"><circle cx="9" cy="9" r="7.8" fill="none" stroke="#a9abb6" stroke-width="1.9"/><path d="M9 4.6 V13.4 M4.6 9 H13.4" stroke="#a9abb6" stroke-width="1.8" fill="none"/></svg>
<a class="t" style="top:383.00px;height:20px;line-height:20px;font-size:13.70px;color:#0f6ccb;left:328.15px;letter-spacing:0.325px;">keyword</a>
<svg style="left:391.10px;top:388.00px" width="13.4" height="10.6" viewBox="0 0 13.4 10.6"><path d="M0.9 0.9 L5.6 5.3 L0.9 9.7 M7.6 0.9 L12.3 5.3 L7.6 9.7" fill="none" stroke="#a9abb6" stroke-width="1.9" stroke-linecap="round" stroke-linejoin="round"/></svg>
<div class="abs" style="left:621.0px;top:384.0px;width:17.2px;height:17px;border-radius:3.5px;background:#c4e5fe"></div><span class="t" style="top:384.00px;height:17px;line-height:17px;font-size:11.40px;color:#006dca;left:621.00px;font-weight:700;width:17.2px;text-align:center;">I</span>
<span class="t" style="top:383.00px;height:20px;line-height:20px;font-size:13.70px;color:#191b23;right:803.38px;">18,100</span>
<svg style="left:808.00px;top:383.00px" width="39" height="20" viewBox="0 0 39 20"><path d="M0.00 11.10 L3.55 11.10 L7.09 11.10 L10.64 9.30 L14.18 6.80 L17.73 12.30 L21.27 11.10 L24.82 11.10 L28.36 0.50 L31.91 8.80 L35.45 11.10 L39.00 9.20 L39 20 L0 20 Z" fill="#dceefd"/><path d="M0.00 11.10 L3.55 11.10 L7.09 11.10 L10.64 9.30 L14.18 6.80 L17.73 12.30 L21.27 11.10 L24.82 11.10 L28.36 0.50 L31.91 8.80 L35.45 11.10 L39.00 9.20" fill="none" stroke="#42a5f5" stroke-width="1.2" stroke-linejoin="round"/></svg>
<span class="t" style="top:383.00px;height:20px;line-height:20px;font-size:13.70px;color:#191b23;right:671.98px;">100</span>
<div class="abs" style="left:922.1px;top:386.1px;width:12.9px;height:12.9px;border-radius:50%;background:#d1002f"></div>
<span class="t" style="top:383.00px;height:20px;line-height:20px;font-size:13.70px;color:#191b23;right:517.78px;">2.14</span>
<span class="t" style="top:383.00px;height:20px;line-height:20px;font-size:13.70px;color:#191b23;right:429.98px;">0.06</span>
<svg style="left:1182.20px;top:384.80px" width="17" height="16" viewBox="0 0 17 16"><path d="M8.5 1.3 L10.65 5.85 L15.7 6.5 L12 9.95 L12.95 14.9 L8.5 12.5 L4.05 14.9 L5 9.95 L1.3 6.5 L6.35 5.85 Z" fill="none" stroke="#a9abb6" stroke-width="1.85" stroke-linejoin="round"/></svg>
<span class="t" style="top:383.00px;height:20px;line-height:20px;font-size:13.70px;color:#6c6e79;left:1208.05px;will-change:transform;letter-spacing:1.144px;">+5</span>
<svg style="left:1208px;top:400px" width="17" height="1" viewBox="0 0 17 1"><path d="M0 0.5 H17" stroke="#6c6e79" stroke-width="1" stroke-dasharray="3 1.67"/></svg>
<span class="t" style="top:383.00px;height:20px;line-height:20px;font-size:13.70px;color:#191b23;right:183.08px;will-change:transform;letter-spacing:0.3px;">2.2B</span>
<svg style="left:1404.70px;top:384.60px" width="18" height="15" viewBox="0 0 18 15"><path d="M0.5 1.7 Q0.5 0.5 1.7 0.5 H16.4 Q17.6 0.5 17.6 1.7 V6 L15.3 3.6 H2.5 V12.3 H7 L8.7 14.4 H1.7 Q0.5 14.4 0.5 13.2 Z" fill="#a9abb6"/><circle cx="12.2" cy="9.6" r="3" fill="none" stroke="#a9abb6" stroke-width="2.1"/><path d="M14.4 11.8 L16.7 14.1" stroke="#a9abb6" stroke-width="2.1" stroke-linecap="round"/></svg>
<span class="t" style="top:383.00px;height:20px;line-height:20px;font-size:13.70px;color:#191b23;left:1465.95px;will-change:transform;letter-spacing:0.185px;">Last week</span>
<svg style="left:1537.90px;top:384.20px" width="17" height="16.5" viewBox="0 0 17 16.5"><path d="M13.6 12.7 A6.7 6.7 0 1 1 13.2 4.1" fill="none" stroke="#006dca" stroke-width="2.1" stroke-linecap="round"/><path d="M15.3 0.9 L16.3 6.7 L9.5 6.6 Z" fill="#006dca" stroke="#006dca" stroke-width="0.6" stroke-linejoin="round"/></svg>
<div class="hline" style="left:249px;top:416px;width:1320px"></div>
<div class="cb" style="left:262px;top:433.0px"></div>
<svg style="left:305.90px;top:432.40px" width="18" height="18" viewBox="0 0 18 18"><circle cx="9" cy="9" r="7.8" fill="none" stroke="#a9abb6" stroke-width="1.9"/><path d="M9 4.6 V13.4 M4.6 9 H13.4" stroke="#a9abb6" stroke-width="1.8" fill="none"/></svg>
<a class="t" style="top:432.00px;height:20px;line-height:20px;font-size:13.70px;color:#0f6ccb;left:328.15px;letter-spacing:0.260px;">keyword planner</a>
<svg style="left:442.30px;top:437.00px" width="13.4" height="10.6" viewBox="0 0 13.4 10.6"><path d="M0.9 0.9 L5.6 5.3 L0.9 9.7 M7.6 0.9 L12.3 5.3 L7.6 9.7" fill="none" stroke="#a9abb6" stroke-width="1.9" stroke-linecap="round" stroke-linejoin="round"/></svg>
<div class="abs" style="left:621.0px;top:433.0px;width:17.2px;height:17px;border-radius:3.5px;background:#c4e5fe"></div><span class="t" style="top:433.00px;height:17px;line-height:17px;font-size:11.40px;color:#006dca;left:621.00px;font-weight:700;width:17.2px;text-align:center;">I</span>
<span class="t" style="top:432.00px;height:20px;line-height:20px;font-size:13.70px;color:#191b23;right:803.38px;">18,100</span>
<svg style="left:808.00px;top:432.00px" width="39" height="20" viewBox="0 0 39 20"><path d="M0.00 11.00 L3.55 9.10 L7.09 7.20 L10.64 0.50 L14.18 7.20 L17.73 9.30 L21.27 6.90 L24.82 6.90 L28.36 6.90 L31.91 6.90 L35.45 6.90 L39.00 6.90 L39 20 L0 20 Z" fill="#dceefd"/><path d="M0.00 11.00 L3.55 9.10 L7.09 7.20 L10.64 0.50 L14.18 7.20 L17.73 9.30 L21.27 6.90 L24.82 6.90 L28.36 6.90 L31.91 6.90 L35.45 6.90 L39.00 6.90" fill="none" stroke="#42a5f5" stroke-width="1.2" stroke-linejoin="round"/></svg>
<span class="t" style="top:432.00px;height:20px;line-height:20px;font-size:13.70px;color:#191b23;right:671.98px;">100</span>
<div class="abs" style="left:922.1px;top:435.1px;width:12.9px;height:12.9px;border-radius:50%;background:#d1002f"></div>
<span class="t" style="top:432.00px;height:20px;line-height:20px;font-size:13.70px;color:#191b23;right:517.78px;">5.93</span>
<span class="t" style="top:432.00px;height:20px;line-height:20px;font-size:13.70px;color:#191b23;right:429.98px;">0.22</span>
<svg style="left:1182.20px;top:433.80px" width="17" height="16" viewBox="0 0 17 16"><path d="M8.5 1.3 L10.65 5.85 L15.7 6.5 L12 9.95 L12.95 14.9 L8.5 12.5 L4.05 14.9 L5 9.95 L1.3 6.5 L6.35 5.85 Z" fill="none" stroke="#a9abb6" stroke-width="1.85" stroke-linejoin="round"/></svg>
<span class="t" style="top:432.00px;height:20px;line-height:20px;font-size:13.70px;color:#6c6e79;left:1208.05px;will-change:transform;letter-spacing:1.144px;">+5</span>
<svg style="left:1208px;top:449px" width="17" height="1" viewBox="0 0 17 1"><path d="M0 0.5 H17" stroke="#6c6e79" stroke-width="1" stroke-dasharray="3 1.67"/></svg>
<span class="t" style="top:432.00px;height:20px;line-height:20px;font-size:13.70px;color:#191b23;right:183.08px;will-change:transform;letter-spacing:0.3px;">13.9M</span>
<svg style="left:1404.70px;top:433.60px" width="18" height="15" viewBox="0 0 18 15"><path d="M0.5 1.7 Q0.5 0.5 1.7 0.5 H16.4 Q17.6 0.5 17.6 1.7 V6 L15.3 3.6 H2.5 V12.3 H7 L8.7 14.4 H1.7 Q0.5 14.4 0.5 13.2 Z" fill="#a9abb6"/><circle cx="12.2" cy="9.6" r="3" fill="none" stroke="#a9abb6" stroke-width="2.1"/><path d="M14.4 11.8 L16.7 14.1" stroke="#a9abb6" stroke-width="2.1" stroke-linecap="round"/></svg>
<span class="t" style="top:432.00px;height:20px;line-height:20px;font-size:13.70px;color:#191b23;left:1465.95px;will-change:transform;letter-spacing:0.185px;">Last week</span>
<svg style="left:1537.90px;top:433.20px" width="17" height="16.5" viewBox="0 0 17 16.5"><path d="M13.6 12.7 A6.7 6.7 0 1 1 13.2 4.1" fill="none" stroke="#006dca" stroke-width="2.1" stroke-linecap="round"/><path d="M15.3 0.9 L16.3 6.7 L9.5 6.6 Z" fill="#006dca" stroke="#006dca" stroke-width="0.6" stroke-linejoin="round"/></svg>
<div class="hline" style="left:249px;top:465px;width:1320px"></div>
<div class="cb" style="left:262px;top:482.0px"></div>
<svg style="left:305.90px;top:481.40px" width="18" height="18" viewBox="0 0 18 18"><circle cx="9" cy="9" r="7.8" fill="none" stroke="#a9abb6" stroke-width="1.9"/><path d="M9 4.6 V13.4 M4.6 9 H13.4" stroke="#a9abb6" stroke-width="1.8" fill="none"/></svg>
<a class="t" style="top:481.00px;height:20px;line-height:20px;font-size:13.70px;color:#0f6ccb;left:328.15px;letter-spacing:0.328px;">keywords</a>
<svg style="left:398.30px;top:486.00px" width="13.4" height="10.6" viewBox="0 0 13.4 10.6"><path d="M0.9 0.9 L5.6 5.3 L0.9 9.7 M7.6 0.9 L12.3 5.3 L7.6 9.7" fill="none" stroke="#a9abb6" stroke-width="1.9" stroke-linecap="round" stroke-linejoin="round"/></svg>
<div class="abs" style="left:621.0px;top:482.0px;width:17.2px;height:17px;border-radius:3.5px;background:#c4e5fe"></div><span class="t" style="top:482.00px;height:17px;line-height:17px;font-size:11.40px;color:#006dca;left:621.00px;font-weight:700;width:17.2px;text-align:center;">I</span>
<span class="t" style="top:481.00px;height:20px;line-height:20px;font-size:13.70px;color:#191b23;right:803.38px;">18,100</span>
<svg style="left:808.00px;top:481.00px" width="39" height="20" viewBox="0 0 39 20"><path d="M0.00 14.70 L3.55 14.70 L7.09 13.90 L10.64 13.90 L14.18 12.50 L17.73 15.10 L21.27 14.20 L24.82 12.70 L28.36 4.40 L31.91 0.50 L35.45 13.90 L39.00 12.70 L39 20 L0 20 Z" fill="#dceefd"/><path d="M0.00 14.70 L3.55 14.70 L7.09 13.90 L10.64 13.90 L14.18 12.50 L17.73 15.10 L21.27 14.20 L24.82 12.70 L28.36 4.40 L31.91 0.50 L35.45 13.90 L39.00 12.70" fill="none" stroke="#42a5f5" stroke-width="1.2" stroke-linejoin="round"/></svg>
<span class="t" style="top:481.00px;height:20px;line-height:20px;font-size:13.70px;color:#191b23;right:671.98px;">100</span>
<div class="abs" style="left:922.1px;top:484.1px;width:12.9px;height:12.9px;border-radius:50%;background:#d1002f"></div>
<span class="t" style="top:481.00px;height:20px;line-height:20px;font-size:13.70px;color:#191b23;right:517.78px;">2.14</span>
<span class="t" style="top:481.00px;height:20px;line-height:20px;font-size:13.70px;color:#191b23;right:429.98px;">0.06</span>
<svg style="left:1182.20px;top:482.80px" width="17" height="16" viewBox="0 0 17 16"><path d="M8.5 1.3 L10.65 5.85 L15.7 6.5 L12 9.95 L12.95 14.9 L8.5 12.5 L4.05 14.9 L5 9.95 L1.3 6.5 L6.35 5.85 Z" fill="none" stroke="#a9abb6" stroke-width="1.85" stroke-linejoin="round"/></svg>
<span class="t" style="top:481.00px;height:20px;line-height:20px;font-size:13.70px;color:#6c6e79;left:1208.05px;will-change:transform;letter-spacing:1.144px;">+6</span>
<svg style="left:1208px;top:498px" width="17" height="1" viewBox="0 0 17 1"><path d="M0 0.5 H17" stroke="#6c6e79" stroke-width="1" stroke-dasharray="3 1.67"/></svg>
<span class="t" style="top:481.00px;height:20px;line-height:20px;font-size:13.70px;color:#191b23;right:183.08px;will-change:transform;letter-spacing:0.3px;">2.2B</span>
<svg style="left:1404.70px;top:482.60px" width="18" height="15" viewBox="0 0 18 15"><path d="M0.5 1.7 Q0.5 0.5 1.7 0.5 H16.4 Q17.6 0.5 17.6 1.7 V6 L15.3 3.6 H2.5 V12.3 H7 L8.7 14.4 H1.7 Q0.5 14.4 0.5 13.2 Z" fill="#a9abb6"/><circle cx="12.2" cy="9.6" r="3" fill="none" stroke="#a9abb6" stroke-width="2.1"/><path d="M14.4 11.8 L16.7 14.1" stroke="#a9abb6" stroke-width="2.1" stroke-linecap="round"/></svg>
<span class="t" style="top:481.00px;height:20px;line-height:20px;font-size:13.70px;color:#191b23;left:1465.95px;will-change:transform;letter-spacing:0.185px;">Last week</span>
<svg style="left:1537.90px;top:482.20px" width="17" height="16.5" viewBox="0 0 17 16.5"><path d="M13.6 12.7 A6.7 6.7 0 1 1 13.2 4.1" fill="none" stroke="#006dca" stroke-width="2.1" stroke-linecap="round"/><path d="M15.3 0.9 L16.3 6.7 L9.5 6.6 Z" fill="#006dca" stroke="#006dca" stroke-width="0.6" stroke-linejoin="round"/></svg>
<div class="hline" style="left:249px;top:514px;width:1320px"></div>
<div class="cb" style="left:262px;top:531.0px"></div>
<svg style="left:305.90px;top:530.40px" width="18" height="18" viewBox="0 0 18 18"><circle cx="9" cy="9" r="7.8" fill="none" stroke="#a9abb6" stroke-width="1.9"/><path d="M9 4.6 V13.4 M4.6 9 H13.4" stroke="#a9abb6" stroke-width="1.8" fill="none"/></svg>
<a class="t" style="top:530.00px;height:20px;line-height:20px;font-size:13.70px;color:#0f6ccb;left:328.15px;letter-spacing:0.236px;">keyword research</a>
<svg style="left:449.80px;top:535.00px" width="13.4" height="10.6" viewBox="0 0 13.4 10.6"><path d="M0.9 0.9 L5.6 5.3 L0.9 9.7 M7.6 0.9 L12.3 5.3 L7.6 9.7" fill="none" stroke="#a9abb6" stroke-width="1.9" stroke-linecap="round" stroke-linejoin="round"/></svg>
<div class="abs" style="left:621.0px;top:531.0px;width:17.2px;height:17px;border-radius:3.5px;background:#c4e5fe"></div><span class="t" style="top:531.00px;height:17px;line-height:17px;font-size:11.40px;color:#006dca;left:621.00px;font-weight:700;width:17.2px;text-align:center;">I</span>
<span class="t" style="top:530.00px;height:20px;line-height:20px;font-size:13.70px;color:#191b23;right:803.38px;">9,900</span>
<svg style="left:808.00px;top:530.00px" width="39" height="20" viewBox="0 0 39 20"><path d="M0.00 7.10 L3.55 7.10 L7.09 7.10 L10.64 4.20 L14.18 7.10 L17.73 7.10 L21.27 7.10 L24.82 7.10 L28.36 4.20 L31.91 4.20 L35.45 4.20 L39.00 4.20 L39 20 L0 20 Z" fill="#dceefd"/><path d="M0.00 7.10 L3.55 7.10 L7.09 7.10 L10.64 4.20 L14.18 7.10 L17.73 7.10 L21.27 7.10 L24.82 7.10 L28.36 4.20 L31.91 4.20 L35.45 4.20 L39.00 4.20" fill="none" stroke="#42a5f5" stroke-width="1.2" stroke-linejoin="round"/></svg>
<span class="t" style="top:530.00px;height:20px;line-height:20px;font-size:13.70px;color:#191b23;right:671.98px;">100</span>
<div class="abs" style="left:922.1px;top:533.1px;width:12.9px;height:12.9px;border-radius:50%;background:#d1002f"></div>
<span class="t" style="top:530.00px;height:20px;line-height:20px;font-size:13.70px;color:#191b23;right:517.78px;">5.74</span>
<span class="t" style="top:530.00px;height:20px;line-height:20px;font-size:13.70px;color:#191b23;right:429.98px;">0.33</span>
<svg style="left:1182.20px;top:531.80px" width="17" height="16" viewBox="0 0 17 16"><path d="M8.5 1.3 L10.65 5.85 L15.7 6.5 L12 9.95 L12.95 14.9 L8.5 12.5 L4.05 14.9 L5 9.95 L1.3 6.5 L6.35 5.85 Z" fill="none" stroke="#a9abb6" stroke-width="1.85" stroke-linejoin="round"/></svg>
<span class="t" style="top:530.00px;height:20px;line-height:20px;font-size:13.70px;color:#6c6e79;left:1208.05px;will-change:transform;letter-spacing:1.144px;">+4</span>
<svg style="left:1208px;top:547px" width="17" height="1" viewBox="0 0 17 1"><path d="M0 0.5 H17" stroke="#6c6e79" stroke-width="1" stroke-dasharray="3 1.67"/></svg>
<span class="t" style="top:530.00px;height:20px;line-height:20px;font-size:13.70px;color:#191b23;right:183.08px;will-change:transform;letter-spacing:0.3px;">503M</span>
<svg style="left:1404.70px;top:531.60px" width="18" height="15" viewBox="0 0 18 15"><path d="M0.5 1.7 Q0.5 0.5 1.7 0.5 H16.4 Q17.6 0.5 17.6 1.7 V6 L15.3 3.6 H2.5 V12.3 H7 L8.7 14.4 H1.7 Q0.5 14.4 0.5 13.2 Z" fill="#a9abb6"/><circle cx="12.2" cy="9.6" r="3" fill="none" stroke="#a9abb6" stroke-width="2.1"/><path d="M14.4 11.8 L16.7 14.1" stroke="#a9abb6" stroke-width="2.1" stroke-linecap="round"/></svg>
<span class="t" style="top:530.00px;height:20px;line-height:20px;font-size:13.70px;color:#191b23;left:1465.95px;will-change:transform;letter-spacing:0.185px;">Last week</span>
<svg style="left:1537.90px;top:531.20px" width="17" height="16.5" viewBox="0 0 17 16.5"><path d="M13.6 12.7 A6.7 6.7 0 1 1 13.2 4.1" fill="none" stroke="#006dca" stroke-width="2.1" stroke-linecap="round"/><path d="M15.3 0.9 L16.3 6.7 L9.5 6.6 Z" fill="#006dca" stroke="#006dca" stroke-width="0.6" stroke-linejoin="round"/></svg>
<div class="hline" style="left:249px;top:563px;width:1320px"></div>
<div class="cb" style="left:262px;top:580.0px"></div>
<svg style="left:305.90px;top:579.40px" width="18" height="18" viewBox="0 0 18 18"><circle cx="9" cy="9" r="7.8" fill="none" stroke="#a9abb6" stroke-width="1.9"/><path d="M9 4.6 V13.4 M4.6 9 H13.4" stroke="#a9abb6" stroke-width="1.8" fill="none"/></svg>
<a class="t" style="top:579.00px;height:20px;line-height:20px;font-size:13.70px;color:#0f6ccb;left:328.15px;letter-spacing:0.242px;">rhyming and keywords</a>
<svg style="left:479.80px;top:584.00px" width="13.4" height="10.6" viewBox="0 0 13.4 10.6"><path d="M0.9 0.9 L5.6 5.3 L0.9 9.7 M7.6 0.9 L12.3 5.3 L7.6 9.7" fill="none" stroke="#a9abb6" stroke-width="1.9" stroke-linecap="round" stroke-linejoin="round"/></svg>
<div class="abs" style="left:621.0px;top:580.0px;width:17.2px;height:17px;border-radius:3.5px;background:#9ef2c9"></div><span class="t" style="top:580.00px;height:17px;line-height:17px;font-size:11.40px;color:#007c65;left:621.00px;font-weight:700;width:17.2px;text-align:center;">T</span>
<span class="t" style="top:579.00px;height:20px;line-height:20px;font-size:13.70px;color:#191b23;right:803.38px;">9,900</span>
<svg style="left:808.00px;top:579.00px" width="39" height="20" viewBox="0 0 39 20"><path d="M0.00 19.30 L3.55 19.00 L7.09 15.00 L10.64 0.50 L14.18 10.70 L17.73 13.80 L21.27 19.00 L24.82 4.10 L28.36 16.70 L31.91 19.00 L35.45 19.30 L39.00 19.30 L39 20 L0 20 Z" fill="#dceefd"/><path d="M0.00 19.30 L3.55 19.00 L7.09 15.00 L10.64 0.50 L14.18 10.70 L17.73 13.80 L21.27 19.00 L24.82 4.10 L28.36 16.70 L31.91 19.00 L35.45 19.30 L39.00 19.30" fill="none" stroke="#42a5f5" stroke-width="1.2" stroke-linejoin="round"/></svg>
<span class="t" style="top:579.00px;height:20px;line-height:20px;font-size:13.70px;color:#191b23;right:671.98px;">17</span>
<div class="abs" style="left:922.1px;top:582.1px;width:12.9px;height:12.9px;border-radius:50%;background:#59ddaa"></div>
<span class="t" style="top:579.00px;height:20px;line-height:20px;font-size:13.70px;color:#191b23;right:517.78px;">0.00</span>
<span class="t" style="top:579.00px;height:20px;line-height:20px;font-size:13.70px;color:#191b23;right:429.98px;">0.00</span>
<svg style="left:1182.20px;top:580.80px" width="17" height="16" viewBox="0 0 17 16"><path d="M8.5 1.3 L10.65 5.85 L15.7 6.5 L12 9.95 L12.95 14.9 L8.5 12.5 L4.05 14.9 L5 9.95 L1.3 6.5 L6.35 5.85 Z" fill="none" stroke="#a9abb6" stroke-width="1.85" stroke-linejoin="round"/></svg>
<svg style="left:1204.90px;top:580.90px" width="15" height="15" viewBox="0 0 15 15"><circle cx="7.5" cy="7.5" r="6.6" fill="none" stroke="#a9abb6" stroke-width="1.7"/><path d="M5.4 4.4 L11 7.5 L5.4 10.6 Z" fill="#a9abb6"/></svg>
<span class="t" style="top:579.00px;height:20px;line-height:20px;font-size:13.70px;color:#191b23;right:183.08px;will-change:transform;letter-spacing:0.3px;">9.3M</span>
<svg style="left:1404.70px;top:580.60px" width="18" height="15" viewBox="0 0 18 15"><path d="M0.5 1.7 Q0.5 0.5 1.7 0.5 H16.4 Q17.6 0.5 17.6 1.7 V6 L15.3 3.6 H2.5 V12.3 H7 L8.7 14.4 H1.7 Q0.5 14.4 0.5 13.2 Z" fill="#a9abb6"/><circle cx="12.2" cy="9.6" r="3" fill="none" stroke="#a9abb6" stroke-width="2.1"/><path d="M14.4 11.8 L16.7 14.1" stroke="#a9abb6" stroke-width="2.1" stroke-linecap="round"/></svg>
<span class="t" style="top:579.00px;height:20px;line-height:20px;font-size:13.70px;color:#191b23;left:1465.95px;will-change:transform;letter-spacing:0.185px;">Last week</span>
<svg style="left:1537.90px;top:580.20px" width="17" height="16.5" viewBox="0 0 17 16.5"><path d="M13.6 12.7 A6.7 6.7 0 1 1 13.2 4.1" fill="none" stroke="#006dca" stroke-width="2.1" stroke-linecap="round"/><path d="M15.3 0.9 L16.3 6.7 L9.5 6.6 Z" fill="#006dca" stroke="#006dca" stroke-width="0.6" stroke-linejoin="round"/></svg>
<div class="hline" style="left:249px;top:612px;width:1320px"></div>
<div class="cb" style="left:262px;top:629.0px"></div>
<svg style="left:305.90px;top:628.40px" width="18" height="18" viewBox="0 0 18 18"><circle cx="9" cy="9" r="7.8" fill="none" stroke="#a9abb6" stroke-width="1.9"/><path d="M9 4.6 V13.4 M4.6 9 H13.4" stroke="#a9abb6" stroke-width="1.8" fill="none"/></svg>
<a class="t" style="top:628.00px;height:20px;line-height:20px;font-size:13.70px;color:#0f6ccb;left:328.15px;letter-spacing:0.136px;">adsense highest paying keywords 2017</a>
<a class="t" style="top:644.00px;height:20px;line-height:20px;font-size:13.70px;color:#0f6ccb;left:328.15px;letter-spacing:0.287px;">outsourcing tips</a>
<svg style="left:438.40px;top:649.00px" width="13.4" height="10.6" viewBox="0 0 13.4 10.6"><path d="M0.9 0.9 L5.6 5.3 L0.9 9.7 M7.6 0.9 L12.3 5.3 L7.6 9.7" fill="none" stroke="#a9abb6" stroke-width="1.9" stroke-linecap="round" stroke-linejoin="round"/></svg>
<div class="abs" style="left:621.0px;top:629.0px;width:17.2px;height:17px;border-radius:3.5px;background:#c4e5fe"></div><span class="t" style="top:629.00px;height:17px;line-height:17px;font-size:11.40px;color:#006dca;left:621.00px;font-weight:700;width:17.2px;text-align:center;">I</span>
<span class="t" style="top:628.00px;height:20px;line-height:20px;font-size:13.70px;color:#191b23;right:803.38px;">8,100</span>
<svg style="left:808.00px;top:628.00px" width="39" height="20" viewBox="0 0 39 20"><path d="M0.00 19.40 L3.55 19.40 L7.09 19.40 L10.64 19.40 L14.18 19.40 L17.73 19.40 L21.27 19.40 L24.82 19.40 L28.36 19.40 L31.91 19.40 L35.45 19.40 L39.00 0.50 L39 20 L0 20 Z" fill="#dceefd"/><path d="M0.00 19.40 L3.55 19.40 L7.09 19.40 L10.64 19.40 L14.18 19.40 L17.73 19.40 L21.27 19.40 L24.82 19.40 L28.36 19.40 L31.91 19.40 L35.45 19.40 L39.00 0.50" fill="none" stroke="#42a5f5" stroke-width="1.2" stroke-linejoin="round"/></svg>
<span class="t" style="top:628.00px;height:20px;line-height:20px;font-size:13.70px;color:#191b23;right:671.98px;">52</span>
<div class="abs" style="left:922.1px;top:631.1px;width:12.9px;height:12.9px;border-radius:50%;background:#ff8c43"></div>
<span class="t" style="top:628.00px;height:20px;line-height:20px;font-size:13.70px;color:#191b23;right:517.78px;">0.00</span>
<span class="t" style="top:628.00px;height:20px;line-height:20px;font-size:13.70px;color:#191b23;right:429.98px;">0.00</span>
<svg style="left:1181.80px;top:632.60px" width="17.2" height="10.8" viewBox="0 0 17.2 10.8"><path d="M7.2 1 H5.4 A4.4 4.4 0 0 0 5.4 9.8 H7.2 M10 1 H11.8 A4.4 4.4 0 0 1 11.8 9.8 H10 M5.9 5.4 H11.3" fill="none" stroke="#a9abb6" stroke-width="1.8" stroke-linecap="round"/></svg>
<svg style="left:1205.00px;top:629.50px" width="15" height="16" viewBox="0 0 15 16"><path d="M0.9 0.9 H14.1 V11.8 H5.2 L0.9 15.2 Z" fill="none" stroke="#a9abb6" stroke-width="1.8" stroke-linejoin="round"/><text x="7.5" y="9.6" font-size="8.6" font-weight="700" text-anchor="middle" fill="#a9abb6" font-family="Liberation Sans, sans-serif">?</text></svg>
<span class="t" style="top:628.00px;height:20px;line-height:20px;font-size:13.70px;color:#191b23;right:183.08px;will-change:transform;letter-spacing:0.3px;">30</span>
<svg style="left:1404.70px;top:629.60px" width="18" height="15" viewBox="0 0 18 15"><path d="M0.5 1.7 Q0.5 0.5 1.7 0.5 H16.4 Q17.6 0.5 17.6 1.7 V6 L15.3 3.6 H2.5 V12.3 H7 L8.7 14.4 H1.7 Q0.5 14.4 0.5 13.2 Z" fill="#a9abb6"/><circle cx="12.2" cy="9.6" r="3" fill="none" stroke="#a9abb6" stroke-width="2.1"/><path d="M14.4 11.8 L16.7 14.1" stroke="#a9abb6" stroke-width="2.1" stroke-linecap="round"/></svg>
<span class="t" style="top:628.00px;height:20px;line-height:20px;font-size:13.70px;color:#191b23;left:1465.95px;will-change:transform;letter-spacing:0.185px;">Last week</span>
<svg style="left:1537.90px;top:629.20px" width="17" height="16.5" viewBox="0 0 17 16.5"><path d="M13.6 12.7 A6.7 6.7 0 1 1 13.2 4.1" fill="none" stroke="#006dca" stroke-width="2.1" stroke-linecap="round"/><path d="M15.3 0.9 L16.3 6.7 L9.5 6.6 Z" fill="#006dca" stroke="#006dca" stroke-width="0.6" stroke-linejoin="round"/></svg>
<div class="hline" style="left:249px;top:677px;width:1320px"></div>
<div class="cb" style="left:262px;top:694.0px"></div>
<svg style="left:305.90px;top:693.40px" width="18" height="18" viewBox="0 0 18 18"><circle cx="9" cy="9" r="7.8" fill="none" stroke="#a9abb6" stroke-width="1.9"/><path d="M9 4.6 V13.4 M4.6 9 H13.4" stroke="#a9abb6" stroke-width="1.8" fill="none"/></svg>
<a class="t" style="top:693.00px;height:20px;line-height:20px;font-size:13.70px;color:#0f6ccb;left:328.15px;letter-spacing:0.181px;">is switch a keyword in javav</a>
<svg style="left:511.30px;top:698.00px" width="13.4" height="10.6" viewBox="0 0 13.4 10.6"><path d="M0.9 0.9 L5.6 5.3 L0.9 9.7 M7.6 0.9 L12.3 5.3 L7.6 9.7" fill="none" stroke="#a9abb6" stroke-width="1.9" stroke-linecap="round" stroke-linejoin="round"/></svg>
<div class="abs" style="left:621.0px;top:694.0px;width:17.2px;height:17px;border-radius:3.5px;background:#c4e5fe"></div><span class="t" style="top:694.00px;height:17px;line-height:17px;font-size:11.40px;color:#006dca;left:621.00px;font-weight:700;width:17.2px;text-align:center;">I</span>
<span class="t" style="top:693.00px;height:20px;line-height:20px;font-size:13.70px;color:#191b23;right:803.38px;">8,100</span>
<svg style="left:808.00px;top:693.00px" width="39" height="20" viewBox="0 0 39 20"><path d="M0.00 19.20 L3.55 19.20 L7.09 19.20 L10.64 19.20 L14.18 19.20 L17.73 19.20 L21.27 19.20 L24.82 19.20 L28.36 0.60 L31.91 3.70 L35.45 4.00 L39.00 19.20 L39 20 L0 20 Z" fill="#dceefd"/><path d="M0.00 19.20 L3.55 19.20 L7.09 19.20 L10.64 19.20 L14.18 19.20 L17.73 19.20 L21.27 19.20 L24.82 19.20 L28.36 0.60 L31.91 3.70 L35.45 4.00 L39.00 19.20" fill="none" stroke="#42a5f5" stroke-width="1.2" stroke-linejoin="round"/></svg>
<span class="t" style="top:693.00px;height:20px;line-height:20px;font-size:13.70px;color:#191b23;right:671.98px;">64</span>
<div class="abs" style="left:922.1px;top:696.1px;width:12.9px;height:12.9px;border-radius:50%;background:#ff8c43"></div>
<span class="t" style="top:693.00px;height:20px;line-height:20px;font-size:13.70px;color:#191b23;right:517.78px;">0.00</span>
<span class="t" style="top:693.00px;height:20px;line-height:20px;font-size:13.70px;color:#191b23;right:429.98px;">0.00</span>
<svg style="left:1181.70px;top:695.20px" width="17.4" height="16.4" viewBox="0 0 17.4 16.4"><path d="M4 11.9 L1.2 4.6 L5.4 6.2 L8.7 1 L12 6.2 L16.2 4.6 L13.4 11.9 Z" fill="none" stroke="#a9abb6" stroke-width="1.7" stroke-linejoin="miter"/><path d="M3.4 15.2 H14" stroke="#a9abb6" stroke-width="1.7"/></svg>
<span class="t" style="top:693.00px;height:20px;line-height:20px;font-size:13.70px;color:#6c6e79;left:1208.05px;will-change:transform;letter-spacing:1.144px;">+3</span>
<svg style="left:1208px;top:710px" width="17" height="1" viewBox="0 0 17 1"><path d="M0 0.5 H17" stroke="#6c6e79" stroke-width="1" stroke-dasharray="3 1.67"/></svg>
<span class="t" style="top:693.00px;height:20px;line-height:20px;font-size:13.70px;color:#191b23;right:183.08px;will-change:transform;letter-spacing:0.3px;">8.3M</span>
<svg style="left:1404.70px;top:694.60px" width="18" height="15" viewBox="0 0 18 15"><path d="M0.5 1.7 Q0.5 0.5 1.7 0.5 H16.4 Q17.6 0.5 17.6 1.7 V6 L15.3 3.6 H2.5 V12.3 H7 L8.7 14.4 H1.7 Q0.5 14.4 0.5 13.2 Z" fill="#a9abb6"/><circle cx="12.2" cy="9.6" r="3" fill="none" stroke="#a9abb6" stroke-width="2.1"/><path d="M14.4 11.8 L16.7 14.1" stroke="#a9abb6" stroke-width="2.1" stroke-linecap="round"/></svg>
<span class="t" style="top:693.00px;height:20px;line-height:20px;font-size:13.70px;color:#191b23;left:1465.95px;will-change:transform;letter-spacing:0.185px;">Last week</span>
<svg style="left:1537.90px;top:694.20px" width="17" height="16.5" viewBox="0 0 17 16.5"><path d="M13.6 12.7 A6.7 6.7 0 1 1 13.2 4.1" fill="none" stroke="#006dca" stroke-width="2.1" stroke-linecap="round"/><path d="M15.3 0.9 L16.3 6.7 L9.5 6.6 Z" fill="#006dca" stroke="#006dca" stroke-width="0.6" stroke-linejoin="round"/></svg>
<div class="hline" style="left:249px;top:726px;width:1320px"></div>
<div class="cb" style="left:262px;top:743.0px"></div>
<svg style="left:305.90px;top:742.40px" width="18" height="18" viewBox="0 0 18 18"><circle cx="9" cy="9" r="7.8" fill="none" stroke="#a9abb6" stroke-width="1.9"/><path d="M9 4.6 V13.4 M4.6 9 H13.4" stroke="#a9abb6" stroke-width="1.8" fill="none"/></svg>
<a class="t" style="top:742.00px;height:20px;line-height:20px;font-size:13.70px;color:#0f6ccb;left:328.15px;letter-spacing:0.179px;">is instanceof a keyword in java</a>
<svg style="left:529.30px;top:747.00px" width="13.4" height="10.6" viewBox="0 0 13.4 10.6"><path d="M0.9 0.9 L5.6 5.3 L0.9 9.7 M7.6 0.9 L12.3 5.3 L7.6 9.7" fill="none" stroke="#a9abb6" stroke-width="1.9" stroke-linecap="round" stroke-linejoin="round"/></svg>
<div class="abs" style="left:621.0px;top:743.0px;width:17.2px;height:17px;border-radius:3.5px;background:#c4e5fe"></div><span class="t" style="top:743.00px;height:17px;line-height:17px;font-size:11.40px;color:#006dca;left:621.00px;font-weight:700;width:17.2px;text-align:center;">I</span>
<span class="t" style="top:742.00px;height:20px;line-height:20px;font-size:13.70px;color:#191b23;right:803.38px;">6,600</span>
<svg style="left:808.00px;top:742.00px" width="39" height="20" viewBox="0 0 39 20"><path d="M0.00 19.30 L3.55 19.30 L7.09 19.30 L10.64 19.30 L14.18 19.30 L17.73 14.50 L21.27 16.20 L24.82 0.70 L28.36 17.10 L31.91 13.70 L35.45 15.40 L39.00 19.30 L39 20 L0 20 Z" fill="#dceefd"/><path d="M0.00 19.30 L3.55 19.30 L7.09 19.30 L10.64 19.30 L14.18 19.30 L17.73 14.50 L21.27 16.20 L24.82 0.70 L28.36 17.10 L31.91 13.70 L35.45 15.40 L39.00 19.30" fill="none" stroke="#42a5f5" stroke-width="1.2" stroke-linejoin="round"/></svg>
<span class="t" style="top:742.00px;height:20px;line-height:20px;font-size:13.70px;color:#191b23;right:671.98px;">46</span>
<div class="abs" style="left:922.1px;top:745.1px;width:12.9px;height:12.9px;border-radius:50%;background:#fdc23c"></div>
<span class="t" style="top:742.00px;height:20px;line-height:20px;font-size:13.70px;color:#191b23;right:517.78px;">0.00</span>
<span class="t" style="top:742.00px;height:20px;line-height:20px;font-size:13.70px;color:#191b23;right:429.98px;">0.00</span>
<svg style="left:1181.70px;top:744.20px" width="17.4" height="16.4" viewBox="0 0 17.4 16.4"><path d="M4 11.9 L1.2 4.6 L5.4 6.2 L8.7 1 L12 6.2 L16.2 4.6 L13.4 11.9 Z" fill="none" stroke="#a9abb6" stroke-width="1.7" stroke-linejoin="miter"/><path d="M3.4 15.2 H14" stroke="#a9abb6" stroke-width="1.7"/></svg>
<span class="t" style="top:742.00px;height:20px;line-height:20px;font-size:13.70px;color:#6c6e79;left:1208.05px;will-change:transform;letter-spacing:1.144px;">+4</span>
<svg style="left:1208px;top:759px" width="17" height="1" viewBox="0 0 17 1"><path d="M0 0.5 H17" stroke="#6c6e79" stroke-width="1" stroke-dasharray="3 1.67"/></svg>
<span class="t" style="top:742.00px;height:20px;line-height:20px;font-size:13.70px;color:#191b23;right:183.08px;will-change:transform;letter-spacing:0.3px;">207K</span>
<svg style="left:1404.70px;top:743.60px" width="18" height="15" viewBox="0 0 18 15"><path d="M0.5 1.7 Q0.5 0.5 1.7 0.5 H16.4 Q17.6 0.5 17.6 1.7 V6 L15.3 3.6 H2.5 V12.3 H7 L8.7 14.4 H1.7 Q0.5 14.4 0.5 13.2 Z" fill="#a9abb6"/><circle cx="12.2" cy="9.6" r="3" fill="none" stroke="#a9abb6" stroke-width="2.1"/><path d="M14.4 11.8 L16.7 14.1" stroke="#a9abb6" stroke-width="2.1" stroke-linecap="round"/></svg>
<span class="t" style="top:742.00px;height:20px;line-height:20px;font-size:13.70px;color:#191b23;left:1465.95px;will-change:transform;letter-spacing:0.185px;">Last week</span>
<svg style="left:1537.90px;top:743.20px" width="17" height="16.5" viewBox="0 0 17 16.5"><path d="M13.6 12.7 A6.7 6.7 0 1 1 13.2 4.1" fill="none" stroke="#006dca" stroke-width="2.1" stroke-linecap="round"/><path d="M15.3 0.9 L16.3 6.7 L9.5 6.6 Z" fill="#006dca" stroke="#006dca" stroke-width="0.6" stroke-linejoin="round"/></svg>
<div class="hline" style="left:249px;top:775px;width:1320px"></div>
<div class="cb" style="left:262px;top:792.0px"></div>
<svg style="left:305.90px;top:791.40px" width="18" height="18" viewBox="0 0 18 18"><circle cx="9" cy="9" r="7.8" fill="none" stroke="#a9abb6" stroke-width="1.9"/><path d="M9 4.6 V13.4 M4.6 9 H13.4" stroke="#a9abb6" stroke-width="1.8" fill="none"/></svg>
<a class="t" style="top:791.00px;height:20px;line-height:20px;font-size:13.70px;color:#0f6ccb;left:328.15px;letter-spacing:0.263px;">keyword search</a>
<svg style="left:437.50px;top:796.00px" width="13.4" height="10.6" viewBox="0 0 13.4 10.6"><path d="M0.9 0.9 L5.6 5.3 L0.9 9.7 M7.6 0.9 L12.3 5.3 L7.6 9.7" fill="none" stroke="#a9abb6" stroke-width="1.9" stroke-linecap="round" stroke-linejoin="round"/></svg>
<div class="abs" style="left:621.0px;top:792.0px;width:17.2px;height:17px;border-radius:3.5px;background:#c4e5fe"></div><span class="t" style="top:792.00px;height:17px;line-height:17px;font-size:11.40px;color:#006dca;left:621.00px;font-weight:700;width:17.2px;text-align:center;">I</span>
<div class="abs" style="left:643.0px;top:792.0px;width:17.2px;height:17px;border-radius:3.5px;background:#9ef2c9"></div><span class="t" style="top:792.00px;height:17px;line-height:17px;font-size:11.40px;color:#007c65;left:643.00px;font-weight:700;width:17.2px;text-align:center;">T</span>
<span class="t" style="top:791.00px;height:20px;line-height:20px;font-size:13.70px;color:#191b23;right:803.38px;">6,600</span>
<svg style="left:808.00px;top:791.00px" width="39" height="20" viewBox="0 0 39 20"><path d="M0.00 8.90 L3.55 6.70 L7.09 6.70 L10.64 10.70 L14.18 9.30 L17.73 12.30 L21.27 0.50 L24.82 4.00 L28.36 0.50 L31.91 4.20 L35.45 4.20 L39.00 6.80 L39 20 L0 20 Z" fill="#dceefd"/><path d="M0.00 8.90 L3.55 6.70 L7.09 6.70 L10.64 10.70 L14.18 9.30 L17.73 12.30 L21.27 0.50 L24.82 4.00 L28.36 0.50 L31.91 4.20 L35.45 4.20 L39.00 6.80" fill="none" stroke="#42a5f5" stroke-width="1.2" stroke-linejoin="round"/></svg>
<span class="t" style="top:791.00px;height:20px;line-height:20px;font-size:13.70px;color:#191b23;right:671.98px;">100</span>
<div class="abs" style="left:922.1px;top:794.1px;width:12.9px;height:12.9px;border-radius:50%;background:#d1002f"></div>
<span class="t" style="top:791.00px;height:20px;line-height:20px;font-size:13.70px;color:#191b23;right:517.78px;">3.62</span>
<span class="t" style="top:791.00px;height:20px;line-height:20px;font-size:13.70px;color:#191b23;right:429.98px;">0.25</span>
<svg style="left:1182.20px;top:792.80px" width="17" height="16" viewBox="0 0 17 16"><path d="M8.5 1.3 L10.65 5.85 L15.7 6.5 L12 9.95 L12.95 14.9 L8.5 12.5 L4.05 14.9 L5 9.95 L1.3 6.5 L6.35 5.85 Z" fill="none" stroke="#a9abb6" stroke-width="1.85" stroke-linejoin="round"/></svg>
<span class="t" style="top:791.00px;height:20px;line-height:20px;font-size:13.70px;color:#6c6e79;left:1208.05px;will-change:transform;letter-spacing:1.144px;">+4</span>
<svg style="left:1208px;top:808px" width="17" height="1" viewBox="0 0 17 1"><path d="M0 0.5 H17" stroke="#6c6e79" stroke-width="1" stroke-dasharray="3 1.67"/></svg>
<span class="t" style="top:791.00px;height:20px;line-height:20px;font-size:13.70px;color:#191b23;right:183.08px;will-change:transform;letter-spacing:0.3px;">2.2B</span>
<svg style="left:1404.70px;top:792.60px" width="18" height="15" viewBox="0 0 18 15"><path d="M0.5 1.7 Q0.5 0.5 1.7 0.5 H16.4 Q17.6 0.5 17.6 1.7 V6 L15.3 3.6 H2.5 V12.3 H7 L8.7 14.4 H1.7 Q0.5 14.4 0.5 13.2 Z" fill="#a9abb6"/><circle cx="12.2" cy="9.6" r="3" fill="none" stroke="#a9abb6" stroke-width="2.1"/><path d="M14.4 11.8 L16.7 14.1" stroke="#a9abb6" stroke-width="2.1" stroke-linecap="round"/></svg>
<span class="t" style="top:791.00px;height:20px;line-height:20px;font-size:13.70px;color:#191b23;left:1465.95px;will-change:transform;letter-spacing:0.185px;">Last week</span>
<svg style="left:1537.90px;top:792.20px" width="17" height="16.5" viewBox="0 0 17 16.5"><path d="M13.6 12.7 A6.7 6.7 0 1 1 13.2 4.1" fill="none" stroke="#006dca" stroke-width="2.1" stroke-linecap="round"/><path d="M15.3 0.9 L16.3 6.7 L9.5 6.6 Z" fill="#006dca" stroke="#006dca" stroke-width="0.6" stroke-linejoin="round"/></svg>
<div class="hline" style="left:249px;top:824px;width:1320px"></div>
<div class="cb" style="left:262px;top:841.0px"></div>
<svg style="left:305.90px;top:840.40px" width="18" height="18" viewBox="0 0 18 18"><circle cx="9" cy="9" r="7.8" fill="none" stroke="#a9abb6" stroke-width="1.9"/><path d="M9 4.6 V13.4 M4.6 9 H13.4" stroke="#a9abb6" stroke-width="1.8" fill="none"/></svg>
<a class="t" style="top:840.00px;height:20px;line-height:20px;font-size:13.70px;color:#0f6ccb;left:328.15px;letter-spacing:0.387px;">keyword tool</a>
<svg style="left:419.30px;top:845.00px" width="13.4" height="10.6" viewBox="0 0 13.4 10.6"><path d="M0.9 0.9 L5.6 5.3 L0.9 9.7 M7.6 0.9 L12.3 5.3 L7.6 9.7" fill="none" stroke="#a9abb6" stroke-width="1.9" stroke-linecap="round" stroke-linejoin="round"/></svg>
<div class="abs" style="left:621.0px;top:841.0px;width:17.2px;height:17px;border-radius:3.5px;background:#c4e5fe"></div><span class="t" style="top:841.00px;height:17px;line-height:17px;font-size:11.40px;color:#006dca;left:621.00px;font-weight:700;width:17.2px;text-align:center;">I</span>
<div class="abs" style="left:643.0px;top:841.0px;width:17.2px;height:17px;border-radius:3.5px;background:#edd9ff"></div><span class="t" style="top:841.00px;height:17px;line-height:17px;font-size:11.40px;color:#8649e1;left:643.00px;font-weight:700;width:17.2px;text-align:center;">N</span>
<span class="t" style="top:840.00px;height:20px;line-height:20px;font-size:13.70px;color:#191b23;right:803.38px;">6,600</span>
<svg style="left:808.00px;top:840.00px" width="39" height="20" viewBox="0 0 39 20"><path d="M0.00 3.80 L3.55 3.80 L7.09 3.80 L10.64 6.50 L14.18 0.60 L17.73 3.80 L21.27 3.80 L24.82 3.80 L28.36 0.60 L31.91 3.50 L35.45 0.60 L39.00 3.50 L39 20 L0 20 Z" fill="#dceefd"/><path d="M0.00 3.80 L3.55 3.80 L7.09 3.80 L10.64 6.50 L14.18 0.60 L17.73 3.80 L21.27 3.80 L24.82 3.80 L28.36 0.60 L31.91 3.50 L35.45 0.60 L39.00 3.50" fill="none" stroke="#42a5f5" stroke-width="1.2" stroke-linejoin="round"/></svg>
<span class="t" style="top:840.00px;height:20px;line-height:20px;font-size:13.70px;color:#191b23;right:671.98px;">100</span>
<div class="abs" style="left:922.1px;top:843.1px;width:12.9px;height:12.9px;border-radius:50%;background:#d1002f"></div>
<span class="t" style="top:840.00px;height:20px;line-height:20px;font-size:13.70px;color:#191b23;right:517.78px;">3.09</span>
<span class="t" style="top:840.00px;height:20px;line-height:20px;font-size:13.70px;color:#191b23;right:429.98px;">0.32</span>
<svg style="left:1182.20px;top:841.80px" width="17" height="16" viewBox="0 0 17 16"><path d="M8.5 1.3 L10.65 5.85 L15.7 6.5 L12 9.95 L12.95 14.9 L8.5 12.5 L4.05 14.9 L5 9.95 L1.3 6.5 L6.35 5.85 Z" fill="none" stroke="#a9abb6" stroke-width="1.85" stroke-linejoin="round"/></svg>
<span class="t" style="top:840.00px;height:20px;line-height:20px;font-size:13.70px;color:#6c6e79;left:1208.05px;will-change:transform;letter-spacing:1.144px;">+4</span>
<svg style="left:1208px;top:857px" width="17" height="1" viewBox="0 0 17 1"><path d="M0 0.5 H17" stroke="#6c6e79" stroke-width="1" stroke-dasharray="3 1.67"/></svg>
<span class="t" style="top:840.00px;height:20px;line-height:20px;font-size:13.70px;color:#191b23;right:183.08px;will-change:transform;letter-spacing:0.3px;">292M</span>
<svg style="left:1404.70px;top:841.60px" width="18" height="15" viewBox="0 0 18 15"><path d="M0.5 1.7 Q0.5 0.5 1.7 0.5 H16.4 Q17.6 0.5 17.6 1.7 V6 L15.3 3.6 H2.5 V12.3 H7 L8.7 14.4 H1.7 Q0.5 14.4 0.5 13.2 Z" fill="#a9abb6"/><circle cx="12.2" cy="9.6" r="3" fill="none" stroke="#a9abb6" stroke-width="2.1"/><path d="M14.4 11.8 L16.7 14.1" stroke="#a9abb6" stroke-width="2.1" stroke-linecap="round"/></svg>
<span class="t" style="top:840.00px;height:20px;line-height:20px;font-size:13.70px;color:#191b23;left:1465.95px;will-change:transform;letter-spacing:0.185px;">Last week</span>
<svg style="left:1537.90px;top:841.20px" width="17" height="16.5" viewBox="0 0 17 16.5"><path d="M13.6 12.7 A6.7 6.7 0 1 1 13.2 4.1" fill="none" stroke="#006dca" stroke-width="2.1" stroke-linecap="round"/><path d="M15.3 0.9 L16.3 6.7 L9.5 6.6 Z" fill="#006dca" stroke="#006dca" stroke-width="0.6" stroke-linejoin="round"/></svg>
<div class="hline" style="left:249px;top:873px;width:1320px"></div>
</main>

</body></html>
